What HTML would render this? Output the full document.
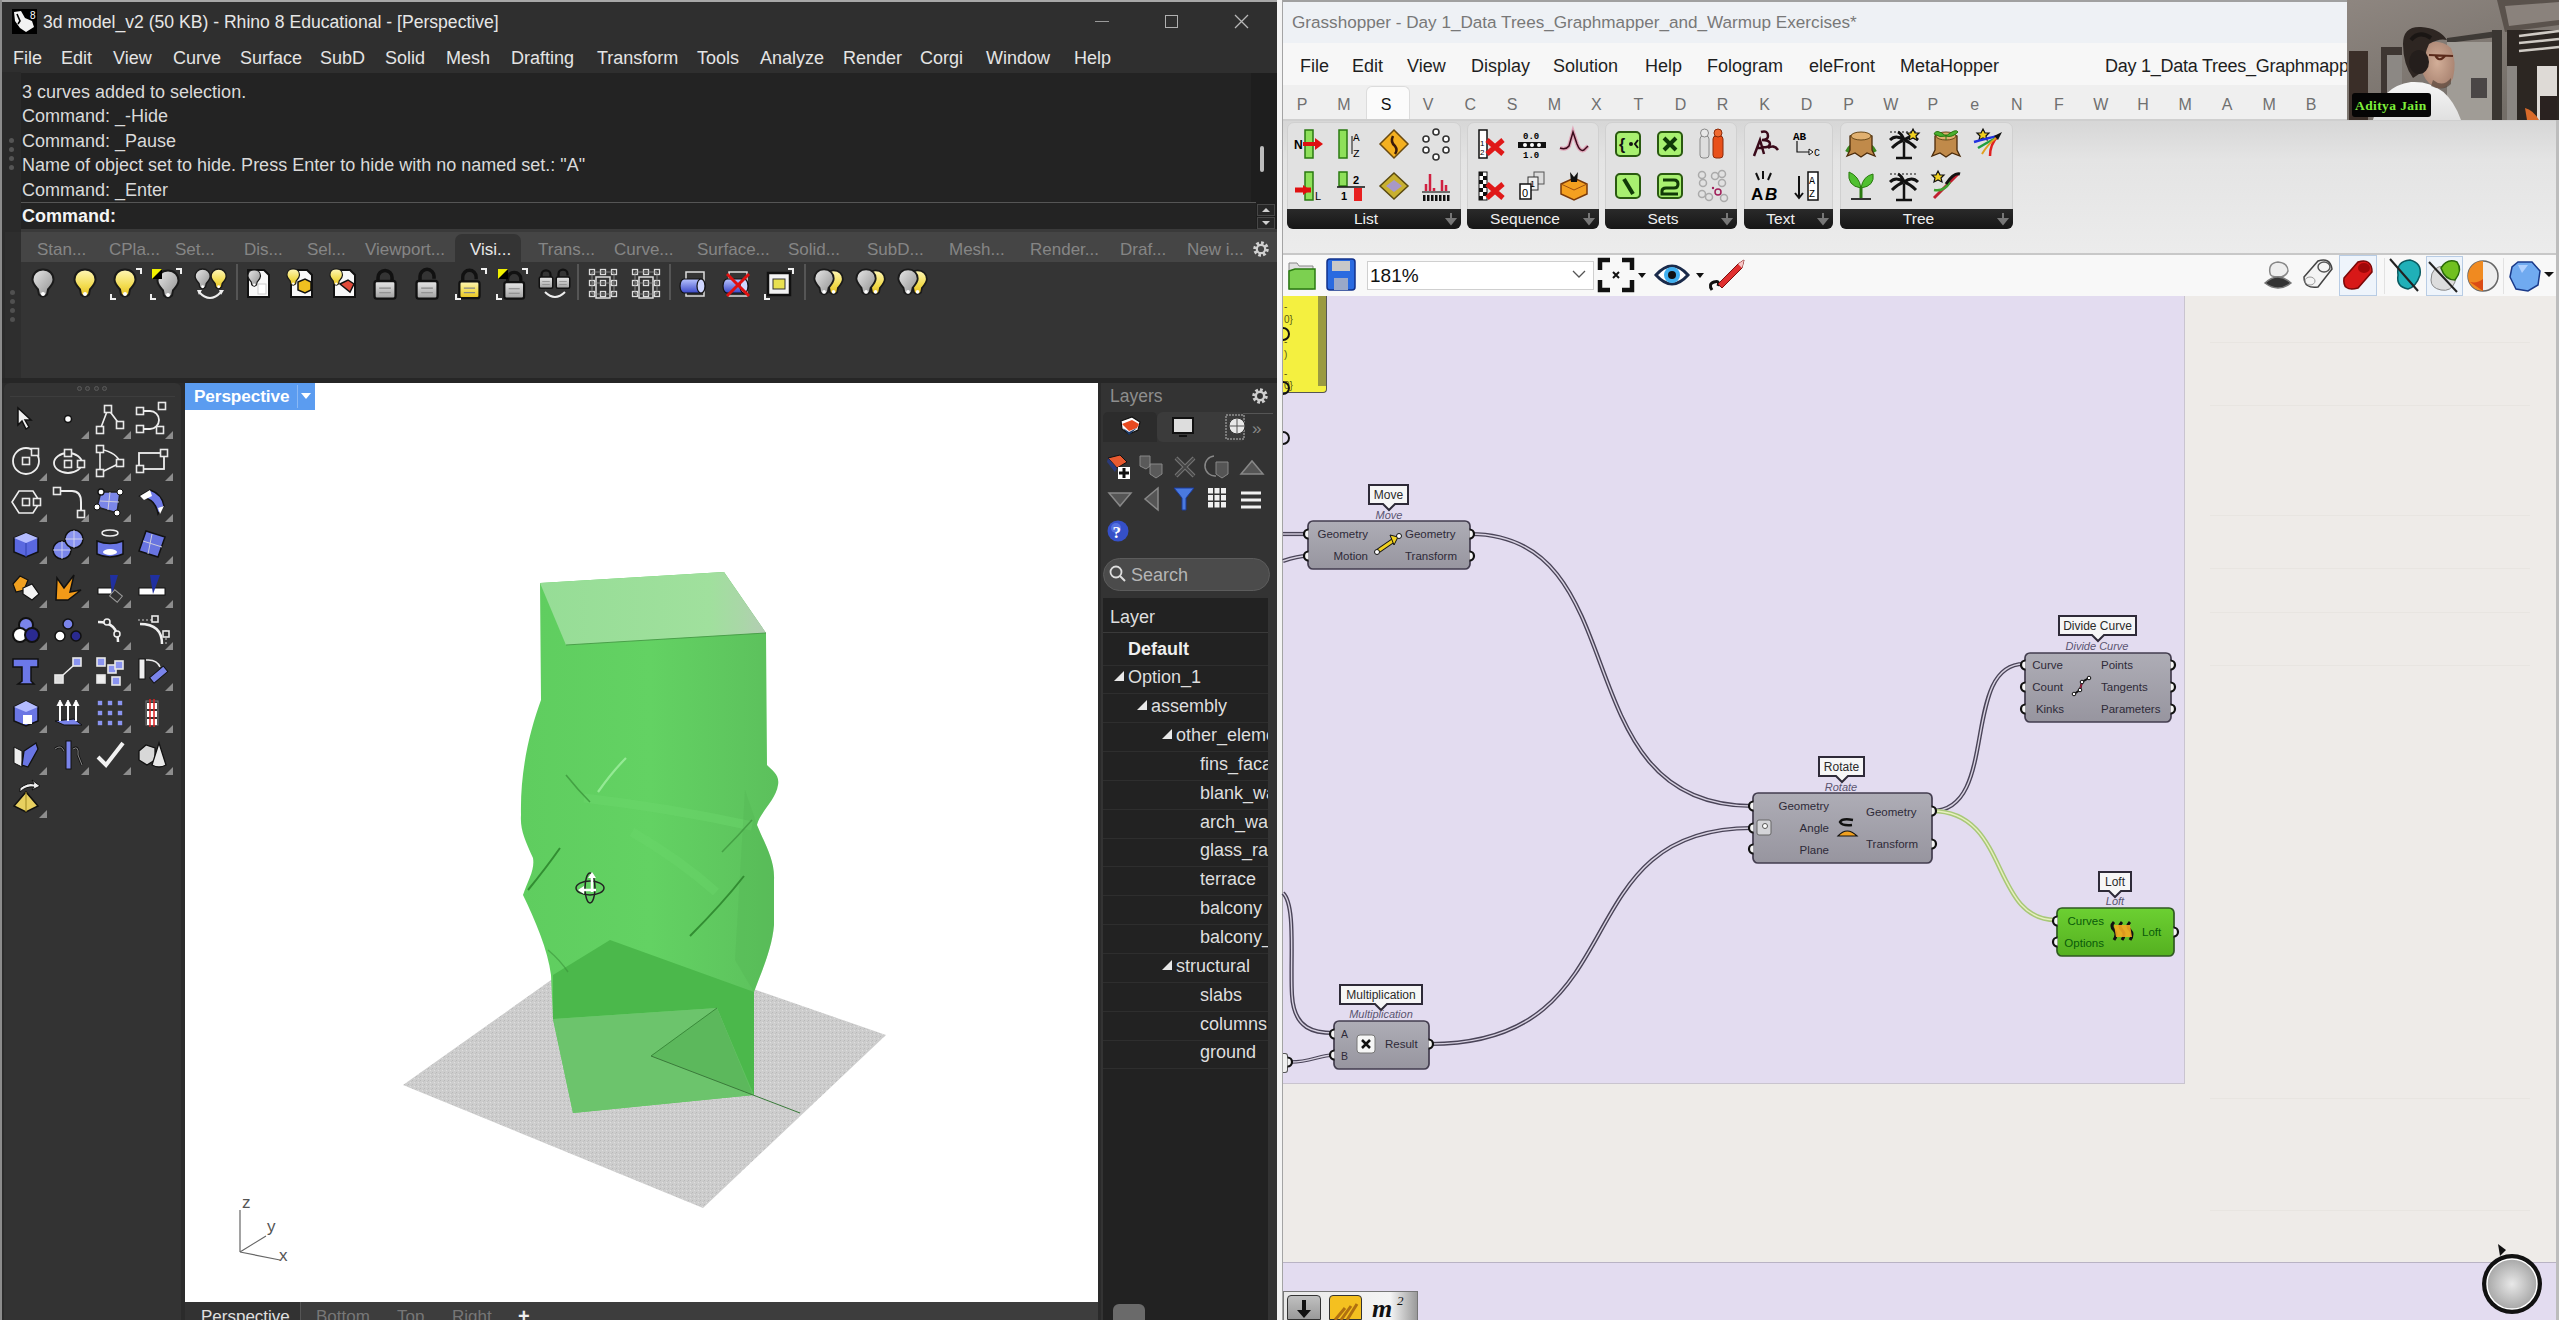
<!DOCTYPE html>
<html><head><meta charset="utf-8">
<style>
*{margin:0;padding:0;box-sizing:border-box}
html,body{width:2559px;height:1320px;overflow:hidden;background:#303030;font-family:"Liberation Sans",sans-serif;position:relative}
.a{position:absolute}
.t{position:absolute;white-space:nowrap;line-height:1}
svg{position:absolute;overflow:visible}
.mi{color:#e4e4e4;font-size:18px;top:48px}
.cl{color:#dadada;font-size:18px;left:22px}
.tb{color:#858585;font-size:17px;top:241px}
.ly{color:#dedede;font-size:18px}
.gm{color:#1e1e1e;font-size:18px;top:56px}
.gt{color:#6c6c6c;font-size:18px;top:95px}
.pl{color:#f2f2f2;font-size:15px;top:211px}
.nl{font-size:11.5px;color:#2e2a38}

</style></head><body>
<div class="a" style="left:0px;top:0px;width:1279px;height:2px;background:#a8a8a8;"></div>
<div class="a" style="left:0px;top:0px;width:2px;height:1320px;background:#8c8c8c;"></div>
<div class="a" style="left:2px;top:2px;width:1275px;height:71px;background:#2f2f2f;"></div>
<svg style="left:12px;top:9px;" width="25" height="25" viewBox="0 0 25 25"><rect x="0" y="0" width="25" height="25" fill="#000"/><path d="M2 3 L9 2 L13 9 L20 12 L22 18 L14 23 L8 19 L3 12 Z" fill="#f2f2f2"/><path d="M5 5 L8 12 L6 15" stroke="#000" stroke-width="1.6" fill="none"/><text x="18" y="10" font-size="10" fill="#fff" font-family="Liberation Sans">8</text></svg>
<div class="t " style="left:43px;top:14px;font-size:17.6px;color:#e6e6e6">3d model_v2 (50 KB) - Rhino 8 Educational - [Perspective]</div>
<div class="a" style="left:1095px;top:21px;width:14px;height:1px;background:#9a9a9a;"></div>
<div class="a" style="left:1165px;top:15px;width:13px;height:13px;background:transparent;border:1px solid #b0b0b0"></div>
<svg style="left:1234px;top:14px;" width="15" height="15" viewBox="0 0 15 15"><path d="M1 1 L14 14 M14 1 L1 14" stroke="#b8b8b8" stroke-width="1.3"/></svg>
<div class="t mi" style="left:13px;top:49px;">File</div>
<div class="t mi" style="left:61px;top:49px;">Edit</div>
<div class="t mi" style="left:113px;top:49px;">View</div>
<div class="t mi" style="left:173px;top:49px;">Curve</div>
<div class="t mi" style="left:240px;top:49px;">Surface</div>
<div class="t mi" style="left:320px;top:49px;">SubD</div>
<div class="t mi" style="left:385px;top:49px;">Solid</div>
<div class="t mi" style="left:446px;top:49px;">Mesh</div>
<div class="t mi" style="left:511px;top:49px;">Drafting</div>
<div class="t mi" style="left:597px;top:49px;">Transform</div>
<div class="t mi" style="left:697px;top:49px;">Tools</div>
<div class="t mi" style="left:760px;top:49px;">Analyze</div>
<div class="t mi" style="left:843px;top:49px;">Render</div>
<div class="t mi" style="left:920px;top:49px;">Corgi</div>
<div class="t mi" style="left:986px;top:49px;">Window</div>
<div class="t mi" style="left:1074px;top:49px;">Help</div>
<div class="a" style="left:2px;top:73px;width:1275px;height:305px;background:#2c2c2c;"></div>
<div class="a" style="left:2px;top:72px;width:19px;height:306px;background:#2a2a2a;"></div>
<div class="a" style="left:9px;top:138px;width:5px;height:5px;background:#555;border-radius:50%"></div>
<div class="a" style="left:9px;top:147px;width:5px;height:5px;background:#555;border-radius:50%"></div>
<div class="a" style="left:9px;top:156px;width:5px;height:5px;background:#555;border-radius:50%"></div>
<div class="a" style="left:9px;top:165px;width:5px;height:5px;background:#555;border-radius:50%"></div>
<div class="a" style="left:21px;top:73px;width:1230px;height:129px;background:#232323;"></div>
<div class="a" style="left:1251px;top:73px;width:26px;height:156px;background:#1e1e1e;"></div>
<div class="a" style="left:1260px;top:146px;width:4px;height:26px;background:#bdbdbd;border-radius:2px"></div>
<div class="a" style="left:21px;top:202px;width:1235px;height:1px;background:#555;"></div>
<div class="a" style="left:21px;top:203px;width:1235px;height:26px;background:#232323;"></div>
<div class="a" style="left:1257px;top:204px;width:18px;height:12px;background:#262626;border:1px solid #474747"></div>
<div class="a" style="left:1257px;top:217px;width:18px;height:12px;background:#262626;border:1px solid #474747"></div>
<svg style="left:1259px;top:206px;" width="14" height="22" viewBox="0 0 14 22"><path d="M3 6 L7 2 L11 6 Z M3 15 L7 19 L11 15 Z" fill="#cfcfcf"/></svg>
<div class="t cl" style="left:22px;top:83px;">3 curves added to selection.</div>
<div class="t cl" style="left:22px;top:107px;">Command: _-Hide</div>
<div class="t cl" style="left:22px;top:132px;">Command: _Pause</div>
<div class="t cl" style="left:22px;top:156px;">Name of object set to hide. Press Enter to hide with no named set.: &quot;A&quot;</div>
<div class="t cl" style="left:22px;top:181px;">Command: _Enter</div>
<div class="t cl" style="left:22px;top:207px;font-weight:bold;color:#f4f4f4">Command:</div>
<div class="a" style="left:21px;top:229px;width:1256px;height:3px;background:#3a3a3a;"></div>
<div class="a" style="left:21px;top:232px;width:1256px;height:30px;background:#454545;"></div>
<div class="a" style="left:21px;top:262px;width:1256px;height:116px;background:#343434;"></div>
<div class="a" style="left:5px;top:232px;width:16px;height:146px;background:#2e2e2e;"></div>
<div class="a" style="left:10px;top:290px;width:5px;height:5px;background:#505050;border-radius:50%"></div>
<div class="a" style="left:10px;top:299px;width:5px;height:5px;background:#505050;border-radius:50%"></div>
<div class="a" style="left:10px;top:308px;width:5px;height:5px;background:#505050;border-radius:50%"></div>
<div class="a" style="left:10px;top:317px;width:5px;height:5px;background:#505050;border-radius:50%"></div>
<div class="a" style="left:455px;top:234px;width:66px;height:28px;background:#343434;border-radius:7px 7px 0 0"></div>
<div class="t tb" style="left:37px;top:241px;">Stan...</div>
<div class="t tb" style="left:109px;top:241px;">CPla...</div>
<div class="t tb" style="left:175px;top:241px;">Set...</div>
<div class="t tb" style="left:244px;top:241px;">Dis...</div>
<div class="t tb" style="left:307px;top:241px;">Sel...</div>
<div class="t tb" style="left:365px;top:241px;">Viewport...</div>
<div class="t tb" style="left:470px;top:241px;color:#e8e8e8">Visi...</div>
<div class="t tb" style="left:538px;top:241px;">Trans...</div>
<div class="t tb" style="left:614px;top:241px;">Curve...</div>
<div class="t tb" style="left:697px;top:241px;">Surface...</div>
<div class="t tb" style="left:788px;top:241px;">Solid...</div>
<div class="t tb" style="left:867px;top:241px;">SubD...</div>
<div class="t tb" style="left:949px;top:241px;">Mesh...</div>
<div class="t tb" style="left:1030px;top:241px;">Render...</div>
<div class="t tb" style="left:1120px;top:241px;">Draf...</div>
<div class="t tb" style="left:1187px;top:241px;">New i...</div>
<svg style="left:1251px;top:239px;" width="20" height="20" viewBox="0 0 20 20"><circle cx="10" cy="10" r="6" fill="none" stroke="#d0d0d0" stroke-width="3.5" stroke-dasharray="2.6 2"/><circle cx="10" cy="10" r="4.2" fill="none" stroke="#d0d0d0" stroke-width="2.2"/></svg>
<div class="a" style="left:2px;top:378px;width:1275px;height:5px;background:#262626;"></div>
<svg width="0" height="0" style="position:absolute"><defs>
<linearGradient id="gb" x1="0" y1="0" x2="1" y2="1"><stop offset="0" stop-color="#e8e8e8"/><stop offset="1" stop-color="#8e8e8e"/></linearGradient>
<linearGradient id="yb" x1="0" y1="0" x2="0" y2="1"><stop offset="0" stop-color="#fff7b8"/><stop offset="0.6" stop-color="#f2dc50"/><stop offset="1" stop-color="#e8c020"/></linearGradient>
<linearGradient id="lk" x1="0" y1="0" x2="0" y2="1"><stop offset="0" stop-color="#e8e8e8"/><stop offset="1" stop-color="#a0a0a0"/></linearGradient>
<linearGradient id="bl" x1="0" y1="0" x2="0" y2="1"><stop offset="0" stop-color="#b8c4ff"/><stop offset="1" stop-color="#3a48c8"/></linearGradient>
<linearGradient id="ghp" x1="0" y1="0" x2="0" y2="1"><stop offset="0" stop-color="#e4e4e4"/><stop offset="1" stop-color="#d8d8d8"/></linearGradient>
<linearGradient id="node" x1="0" y1="0" x2="0" y2="1"><stop offset="0" stop-color="#aeadb6"/><stop offset="1" stop-color="#97959f"/></linearGradient>
<linearGradient id="nodeg" x1="0" y1="0" x2="0" y2="1"><stop offset="0" stop-color="#6cd032"/><stop offset="1" stop-color="#55b020"/></linearGradient>
</defs></svg>
<svg style="left:30px;top:268px;" width="26" height="32" viewBox="0 0 26 32"><g transform="translate(1,0) scale(1.0)"><path d="M12 1.5 C5.5 1.5 1.5 6 1.5 11.5 C1.5 15.5 4.5 18.5 7 21.5 L8 26.5 Q12 30.5 16 26.5 L17 21.5 C19.5 18.5 22.5 15.5 22.5 11.5 C22.5 6 18.5 1.5 12 1.5 Z" fill="url(#gb)" stroke="#1a1a1a" stroke-width="2"/><circle cx="12" cy="26" r="2" fill="#fff"/></g></svg>
<svg style="left:72px;top:268px;" width="26" height="32" viewBox="0 0 26 32"><g transform="translate(1,0) scale(1.0)"><path d="M12 1.5 C5.5 1.5 1.5 6 1.5 11.5 C1.5 15.5 4.5 18.5 7 21.5 L8 26.5 Q12 30.5 16 26.5 L17 21.5 C19.5 18.5 22.5 15.5 22.5 11.5 C22.5 6 18.5 1.5 12 1.5 Z" fill="url(#yb)" stroke="#1a1a1a" stroke-width="2"/><circle cx="12" cy="26" r="2" fill="#fff"/></g></svg>
<svg style="left:110px;top:268px;" width="32" height="32" viewBox="0 0 32 32"><g transform="translate(3,0) scale(1.0)"><path d="M12 1.5 C5.5 1.5 1.5 6 1.5 11.5 C1.5 15.5 4.5 18.5 7 21.5 L8 26.5 Q12 30.5 16 26.5 L17 21.5 C19.5 18.5 22.5 15.5 22.5 11.5 C22.5 6 18.5 1.5 12 1.5 Z" fill="url(#yb)" stroke="#1a1a1a" stroke-width="2"/><circle cx="12" cy="26" r="2" fill="#fff"/></g><path d="M26 1 L31 1 L31 6 M1 26 L1 31 L6 31" stroke="#f0f0f0" stroke-width="2" fill="none"/></svg>
<svg style="left:150px;top:268px;" width="32" height="32" viewBox="0 0 32 32"><g transform="translate(6,1) scale(1.0)"><path d="M12 1.5 C5.5 1.5 1.5 6 1.5 11.5 C1.5 15.5 4.5 18.5 7 21.5 L8 26.5 Q12 30.5 16 26.5 L17 21.5 C19.5 18.5 22.5 15.5 22.5 11.5 C22.5 6 18.5 1.5 12 1.5 Z" fill="url(#gb)" stroke="#1a1a1a" stroke-width="2"/><circle cx="12" cy="26" r="2" fill="#fff"/></g><rect x="2" y="1" width="10" height="10" fill="#000"/><path d="M2 1 L12 1 L2 11 Z" fill="#f0f000"/><path d="M26 1 L31 1 L31 6 M1 26 L1 31 L6 31" stroke="#f0f0f0" stroke-width="2" fill="none"/></svg>
<svg style="left:193px;top:268px;" width="36" height="34" viewBox="0 0 36 34"><g transform="translate(1,0) scale(0.72)"><path d="M12 1.5 C5.5 1.5 1.5 6 1.5 11.5 C1.5 15.5 4.5 18.5 7 21.5 L8 26.5 Q12 30.5 16 26.5 L17 21.5 C19.5 18.5 22.5 15.5 22.5 11.5 C22.5 6 18.5 1.5 12 1.5 Z" fill="url(#gb)" stroke="#1a1a1a" stroke-width="2"/><circle cx="12" cy="26" r="2" fill="#fff"/></g><g transform="translate(17,0) scale(0.72)"><path d="M12 1.5 C5.5 1.5 1.5 6 1.5 11.5 C1.5 15.5 4.5 18.5 7 21.5 L8 26.5 Q12 30.5 16 26.5 L17 21.5 C19.5 18.5 22.5 15.5 22.5 11.5 C22.5 6 18.5 1.5 12 1.5 Z" fill="url(#yb)" stroke="#1a1a1a" stroke-width="2"/><circle cx="12" cy="26" r="2" fill="#fff"/></g><path d="M6 24 Q17 36 28 24" stroke="#eee" stroke-width="2" fill="none"/><path d="M4 22 L9 22 L6 27 Z M26 22 L31 22 L28 27Z" fill="#eee"/></svg>
<div class="a" style="left:236px;top:264px;width:2px;height:36px;background:#555;"></div>
<svg style="left:244px;top:268px;" width="30" height="32" viewBox="0 0 30 32"><g transform="translate(1,0)"><path d="M3 2 H19 L24 7 V29 H3 Z" fill="#f8f8f8" stroke="#111" stroke-width="2"/></g><g transform="translate(3,1) scale(0.6)"><path d="M12 1.5 C5.5 1.5 1.5 6 1.5 11.5 C1.5 15.5 4.5 18.5 7 21.5 L8 26.5 Q12 30.5 16 26.5 L17 21.5 C19.5 18.5 22.5 15.5 22.5 11.5 C22.5 6 18.5 1.5 12 1.5 Z" fill="url(#gb)" stroke="#1a1a1a" stroke-width="2"/><circle cx="12" cy="26" r="2" fill="#fff"/></g><rect x="14" y="16" width="8" height="10" fill="#fff" stroke="#ccc"/></svg>
<svg style="left:286px;top:268px;" width="30" height="32" viewBox="0 0 30 32"><g transform="translate(2,0)"><path d="M3 2 H19 L24 7 V29 H3 Z" fill="#f8f8f8" stroke="#111" stroke-width="2"/></g><g transform="translate(0,0) scale(0.6)"><path d="M12 1.5 C5.5 1.5 1.5 6 1.5 11.5 C1.5 15.5 4.5 18.5 7 21.5 L8 26.5 Q12 30.5 16 26.5 L17 21.5 C19.5 18.5 22.5 15.5 22.5 11.5 C22.5 6 18.5 1.5 12 1.5 Z" fill="url(#yb)" stroke="#1a1a1a" stroke-width="2"/><circle cx="12" cy="26" r="2" fill="#fff"/></g><path d="M12 14 L19 11 L25 14 L25 22 L19 25 L12 22 Z" fill="#f0c020" stroke="#111" stroke-width="1.5"/></svg>
<svg style="left:329px;top:268px;" width="30" height="32" viewBox="0 0 30 32"><g transform="translate(2,0)"><path d="M3 2 H19 L24 7 V29 H3 Z" fill="#f8f8f8" stroke="#111" stroke-width="2"/></g><g transform="translate(0,0) scale(0.6)"><path d="M12 1.5 C5.5 1.5 1.5 6 1.5 11.5 C1.5 15.5 4.5 18.5 7 21.5 L8 26.5 Q12 30.5 16 26.5 L17 21.5 C19.5 18.5 22.5 15.5 22.5 11.5 C22.5 6 18.5 1.5 12 1.5 Z" fill="url(#yb)" stroke="#1a1a1a" stroke-width="2"/><circle cx="12" cy="26" r="2" fill="#fff"/></g><path d="M11 16 L19 12 L25 16 L21 24 Z" fill="#e04a3a" stroke="#111" stroke-width="1.5"/></svg>
<svg style="left:371px;top:267px;" width="28" height="32" viewBox="0 0 28 32"><g transform="translate(0,0) scale(1.17)"><path d="M6 13 L6 9 A6 6 0 0 1 18 9 L18 13" stroke="#111" stroke-width="3" fill="none"/><rect x="3" y="12" width="18" height="15" rx="2" fill="url(#lk)" stroke="#111" stroke-width="2"/><path d="M7 18 H17 M7 22 H17" stroke="#888" stroke-width="1"/></g></svg>
<svg style="left:413px;top:267px;" width="28" height="32" viewBox="0 0 28 32"><g transform="translate(0,0) scale(1.17)"><path d="M6 13 L6 8 A6 6 0 0 1 18 8 L18 10" stroke="#111" stroke-width="3" fill="none"/><rect x="3" y="12" width="18" height="15" rx="2" fill="url(#lk)" stroke="#111" stroke-width="2"/><path d="M7 18 H17 M7 22 H17" stroke="#888" stroke-width="1"/></g></svg>
<svg style="left:455px;top:268px;" width="32" height="32" viewBox="0 0 32 32"><g transform="translate(1,0) scale(1.12)"><path d="M6 13 L6 8 A6 6 0 0 1 18 8 L18 10" stroke="#111" stroke-width="3" fill="none"/><rect x="3" y="12" width="18" height="15" rx="2" fill="url(#yb)" stroke="#111" stroke-width="2"/><path d="M7 18 H17 M7 22 H17" stroke="#888" stroke-width="1"/></g><path d="M26 1 L31 1 L31 6 M1 26 L1 31 L6 31" stroke="#f0f0f0" stroke-width="2" fill="none"/></svg>
<svg style="left:496px;top:268px;" width="32" height="32" viewBox="0 0 32 32"><g transform="translate(5,1) scale(1.1)"><path d="M6 13 L6 9 A6 6 0 0 1 18 9 L18 13" stroke="#111" stroke-width="3" fill="none"/><rect x="3" y="12" width="18" height="15" rx="2" fill="url(#lk)" stroke="#111" stroke-width="2"/><path d="M7 18 H17 M7 22 H17" stroke="#888" stroke-width="1"/></g><rect x="2" y="1" width="10" height="10" fill="#000"/><path d="M2 1 L12 1 L2 11 Z" fill="#f0f000"/><path d="M26 1 L31 1 L31 6 M1 26 L1 31 L6 31" stroke="#f0f0f0" stroke-width="2" fill="none"/></svg>
<svg style="left:537px;top:268px;" width="36" height="32" viewBox="0 0 36 32"><g transform="translate(0,0) scale(0.75)"><path d="M6 13 L6 9 A6 6 0 0 1 18 9 L18 13" stroke="#111" stroke-width="3" fill="none"/><rect x="3" y="12" width="18" height="15" rx="2" fill="url(#lk)" stroke="#111" stroke-width="2"/><path d="M7 18 H17 M7 22 H17" stroke="#888" stroke-width="1"/></g><g transform="translate(17,0) scale(0.75)"><path d="M6 13 L6 8 A6 6 0 0 1 18 8 L18 10" stroke="#111" stroke-width="3" fill="none"/><rect x="3" y="12" width="18" height="15" rx="2" fill="url(#lk)" stroke="#111" stroke-width="2"/><path d="M7 18 H17 M7 22 H17" stroke="#888" stroke-width="1"/></g><path d="M8 24 Q18 34 28 24" stroke="#eee" stroke-width="2" fill="none"/></svg>
<div class="a" style="left:577px;top:264px;width:2px;height:36px;background:#555;"></div>
<svg style="left:588px;top:268px;" width="30" height="32" viewBox="0 0 30 32"><rect x="8" y="9" width="14" height="21" fill="none" stroke="#ddd" stroke-width="1.5"/><rect x="1.5" y="1.5" width="5" height="5" fill="#333" stroke="#ddd" stroke-width="1.3"/><rect x="1.5" y="12.5" width="5" height="5" fill="#333" stroke="#ddd" stroke-width="1.3"/><rect x="1.5" y="23.5" width="5" height="5" fill="#333" stroke="#ddd" stroke-width="1.3"/><rect x="12.5" y="1.5" width="5" height="5" fill="#333" stroke="#ddd" stroke-width="1.3"/><rect x="12.5" y="12.5" width="5" height="5" fill="#333" stroke="#ddd" stroke-width="1.3"/><rect x="12.5" y="23.5" width="5" height="5" fill="#333" stroke="#ddd" stroke-width="1.3"/><rect x="23.5" y="1.5" width="5" height="5" fill="#333" stroke="#ddd" stroke-width="1.3"/><rect x="23.5" y="12.5" width="5" height="5" fill="#333" stroke="#ddd" stroke-width="1.3"/><rect x="23.5" y="23.5" width="5" height="5" fill="#333" stroke="#ddd" stroke-width="1.3"/><path d="M4 4 H26 M4 15 H26 M4 26 H26 M4 4 V26 M26 4 V26" stroke="#999" stroke-width="0.8" fill="none"/></svg>
<svg style="left:631px;top:268px;" width="30" height="32" viewBox="0 0 30 32"><rect x="8" y="9" width="14" height="21" fill="none" stroke="#ddd" stroke-width="1.5"/><rect x="1.5" y="1.5" width="5" height="5" fill="#333" stroke="#ddd" stroke-width="1.3"/><rect x="1.5" y="12.5" width="5" height="5" fill="#333" stroke="#ddd" stroke-width="1.3"/><rect x="1.5" y="23.5" width="5" height="5" fill="#333" stroke="#ddd" stroke-width="1.3"/><rect x="12.5" y="1.5" width="5" height="5" fill="#333" stroke="#ddd" stroke-width="1.3"/><rect x="12.5" y="12.5" width="5" height="5" fill="#333" stroke="#ddd" stroke-width="1.3"/><rect x="12.5" y="23.5" width="5" height="5" fill="#333" stroke="#ddd" stroke-width="1.3"/><rect x="23.5" y="1.5" width="5" height="5" fill="#333" stroke="#ddd" stroke-width="1.3"/><rect x="23.5" y="12.5" width="5" height="5" fill="#333" stroke="#ddd" stroke-width="1.3"/><rect x="23.5" y="23.5" width="5" height="5" fill="#333" stroke="#ddd" stroke-width="1.3"/><path d="M4 4 H26 M4 15 H26 M4 26 H26 M4 4 V26 M26 4 V26" stroke="#999" stroke-width="0.8" fill="none"/></svg>
<div class="a" style="left:669px;top:264px;width:2px;height:36px;background:#555;"></div>
<svg style="left:679px;top:268px;" width="30" height="32" viewBox="0 0 30 32"><rect x="7" y="4" width="18" height="24" fill="none" stroke="#ddd" stroke-width="1.5"/><path d="M5 11 H22 A4 7 0 0 1 22 25 H5 A4 7 0 0 1 5 11 Z" fill="url(#bl)" stroke="#111" stroke-width="1.2"/><ellipse cx="22" cy="18" rx="4" ry="7" fill="#cfd6ff" stroke="#111" stroke-width="1.2"/></svg>
<svg style="left:722px;top:268px;" width="30" height="32" viewBox="0 0 30 32"><rect x="7" y="4" width="18" height="24" fill="none" stroke="#ddd" stroke-width="1.5"/><path d="M5 11 H22 A4 7 0 0 1 22 25 H5 A4 7 0 0 1 5 11 Z" fill="url(#bl)" stroke="#111" stroke-width="1.2"/><ellipse cx="22" cy="18" rx="4" ry="7" fill="#cfd6ff" stroke="#111" stroke-width="1.2"/><path d="M5 6 L27 28 M27 6 L5 28" stroke="#e01010" stroke-width="3"/></svg>
<svg style="left:764px;top:268px;" width="30" height="32" viewBox="0 0 30 32"><rect x="4" y="5" width="22" height="22" fill="#f4f4f4" stroke="#111" stroke-width="2.5"/><rect x="9" y="11" width="12" height="10" fill="#e8e050" stroke="#333"/><path d="M24 1 L29 1 L29 6 M1 26 L1 31 L6 31" stroke="#f0f0f0" stroke-width="2" fill="none"/></svg>
<div class="a" style="left:804px;top:264px;width:2px;height:36px;background:#555;"></div>
<svg style="left:813px;top:268px;" width="32" height="32" viewBox="0 0 32 32"><g transform="translate(10,1) scale(0.88)"><path d="M12 1.5 C5.5 1.5 1.5 6 1.5 11.5 C1.5 15.5 4.5 18.5 7 21.5 L8 26.5 Q12 30.5 16 26.5 L17 21.5 C19.5 18.5 22.5 15.5 22.5 11.5 C22.5 6 18.5 1.5 12 1.5 Z" fill="url(#yb)" stroke="#1a1a1a" stroke-width="2"/><circle cx="12" cy="26" r="2" fill="#fff"/></g><g transform="translate(0,0) scale(0.92)"><path d="M12 1.5 C5.5 1.5 1.5 6 1.5 11.5 C1.5 15.5 4.5 18.5 7 21.5 L8 26.5 Q12 30.5 16 26.5 L17 21.5 C19.5 18.5 22.5 15.5 22.5 11.5 C22.5 6 18.5 1.5 12 1.5 Z" fill="url(#gb)" stroke="#1a1a1a" stroke-width="2"/><circle cx="12" cy="26" r="2" fill="#fff"/></g></svg>
<svg style="left:855px;top:268px;" width="32" height="32" viewBox="0 0 32 32"><g transform="translate(10,1) scale(0.88)"><path d="M12 1.5 C5.5 1.5 1.5 6 1.5 11.5 C1.5 15.5 4.5 18.5 7 21.5 L8 26.5 Q12 30.5 16 26.5 L17 21.5 C19.5 18.5 22.5 15.5 22.5 11.5 C22.5 6 18.5 1.5 12 1.5 Z" fill="url(#yb)" stroke="#1a1a1a" stroke-width="2"/><circle cx="12" cy="26" r="2" fill="#fff"/></g><g transform="translate(0,0) scale(0.92)"><path d="M12 1.5 C5.5 1.5 1.5 6 1.5 11.5 C1.5 15.5 4.5 18.5 7 21.5 L8 26.5 Q12 30.5 16 26.5 L17 21.5 C19.5 18.5 22.5 15.5 22.5 11.5 C22.5 6 18.5 1.5 12 1.5 Z" fill="url(#gb)" stroke="#1a1a1a" stroke-width="2"/><circle cx="12" cy="26" r="2" fill="#fff"/></g></svg>
<svg style="left:897px;top:268px;" width="32" height="32" viewBox="0 0 32 32"><g transform="translate(10,1) scale(0.88)"><path d="M12 1.5 C5.5 1.5 1.5 6 1.5 11.5 C1.5 15.5 4.5 18.5 7 21.5 L8 26.5 Q12 30.5 16 26.5 L17 21.5 C19.5 18.5 22.5 15.5 22.5 11.5 C22.5 6 18.5 1.5 12 1.5 Z" fill="url(#yb)" stroke="#1a1a1a" stroke-width="2"/><circle cx="12" cy="26" r="2" fill="#fff"/></g><g transform="translate(0,0) scale(0.92)"><path d="M12 1.5 C5.5 1.5 1.5 6 1.5 11.5 C1.5 15.5 4.5 18.5 7 21.5 L8 26.5 Q12 30.5 16 26.5 L17 21.5 C19.5 18.5 22.5 15.5 22.5 11.5 C22.5 6 18.5 1.5 12 1.5 Z" fill="url(#gb)" stroke="#1a1a1a" stroke-width="2"/><circle cx="12" cy="26" r="2" fill="#fff"/></g></svg>
<div class="a" style="left:2px;top:383px;width:183px;height:937px;background:#2b2b2b;"></div>
<div class="a" style="left:4px;top:383px;width:177px;height:937px;background:#333333;border-radius:6px 6px 0 0"></div>
<div class="a" style="left:77px;top:386px;width:5px;height:5px;background:#3a3a3a;border:1px solid #5a5a5a;border-radius:50%"></div>
<div class="a" style="left:85px;top:386px;width:5px;height:5px;background:#3a3a3a;border:1px solid #5a5a5a;border-radius:50%"></div>
<div class="a" style="left:94px;top:386px;width:5px;height:5px;background:#3a3a3a;border:1px solid #5a5a5a;border-radius:50%"></div>
<div class="a" style="left:102px;top:386px;width:5px;height:5px;background:#3a3a3a;border:1px solid #5a5a5a;border-radius:50%"></div>
<div class="a" style="left:10px;top:396px;width:165px;height:1px;background:#3d3d3d;"></div>
<svg style="left:0px;top:0px;" width="190" height="830" viewBox="0 0 190 830"><g transform="translate(26,419)"><path d="M-8 -11 L-8 6 L-4 2 L0 10 L3 8 L-1 1 L5 1 Z" fill="#f0f0f0" stroke="#111" stroke-width="1.5"/></g><g transform="translate(68,419)"><circle cx="0" cy="0" r="3.5" fill="#fff" stroke="#111" stroke-width="1.5"/></g><path d="M89 431 L89 439 L81 439 Z" fill="#8d8d8d"/><g transform="translate(110,419)"><path d="M-10 11 L-2 -10 L10 6" stroke="#eee" stroke-width="1.6" fill="none"/><rect x="-13.5" y="7.5" width="7" height="7" fill="#333" stroke="#e8e8e8" stroke-width="1.6"/><rect x="-5.5" y="-13.5" width="7" height="7" fill="#333" stroke="#e8e8e8" stroke-width="1.6"/><rect x="6.5" y="2.5" width="7" height="7" fill="#333" stroke="#e8e8e8" stroke-width="1.6"/></g><path d="M131 431 L131 439 L123 439 Z" fill="#8d8d8d"/><g transform="translate(152,419)"><path d="M-12 -8 H-2 A9 9 0 0 1 -2 10 H-12" stroke="#eee" stroke-width="1.8" fill="none"/><rect x="-15.5" y="-11.5" width="7" height="7" fill="#333" stroke="#e8e8e8" stroke-width="1.6"/><rect x="-15.5" y="6.5" width="7" height="7" fill="#333" stroke="#e8e8e8" stroke-width="1.6"/><rect x="6.5" y="-16.5" width="7" height="7" fill="#333" stroke="#e8e8e8" stroke-width="1.6"/><rect x="4.5" y="7.5" width="7" height="7" fill="#333" stroke="#e8e8e8" stroke-width="1.6"/></g><path d="M173 431 L173 439 L165 439 Z" fill="#8d8d8d"/><g transform="translate(26,461)"><circle cx="0" cy="0" r="13" stroke="#eee" stroke-width="1.8" fill="none"/><rect x="-3.5" y="-3.5" width="7" height="7" fill="#333" stroke="#e8e8e8" stroke-width="1.6"/><rect x="5.5" y="-12.5" width="7" height="7" fill="#333" stroke="#e8e8e8" stroke-width="1.6"/></g><path d="M47 473 L47 481 L39 481 Z" fill="#8d8d8d"/><g transform="translate(68,461)"><ellipse cx="0" cy="2" rx="14" ry="10" stroke="#eee" stroke-width="1.8" fill="none"/><rect x="-3.5" y="-11.5" width="7" height="7" fill="#333" stroke="#e8e8e8" stroke-width="1.6"/><rect x="-3.5" y="-0.5" width="7" height="7" fill="#333" stroke="#e8e8e8" stroke-width="1.6"/><rect x="9.5" y="-0.5" width="7" height="7" fill="#333" stroke="#e8e8e8" stroke-width="1.6"/></g><path d="M89 473 L89 481 L81 481 Z" fill="#8d8d8d"/><g transform="translate(110,461)"><path d="M-10 -12 Q8 -8 10 2 L-10 12 Z" stroke="#eee" stroke-width="1.6" fill="none"/><rect x="-13.5" y="-15.5" width="7" height="7" fill="#333" stroke="#e8e8e8" stroke-width="1.6"/><rect x="6.5" y="-1.5" width="7" height="7" fill="#333" stroke="#e8e8e8" stroke-width="1.6"/><rect x="-13.5" y="8.5" width="7" height="7" fill="#333" stroke="#e8e8e8" stroke-width="1.6"/></g><path d="M131 473 L131 481 L123 481 Z" fill="#8d8d8d"/><g transform="translate(152,461)"><rect x="-13" y="-8" width="25" height="16" stroke="#eee" stroke-width="1.8" fill="none"/><rect x="8.5" y="-11.5" width="7" height="7" fill="#333" stroke="#e8e8e8" stroke-width="1.6"/><rect x="-15.5" y="4.5" width="7" height="7" fill="#333" stroke="#e8e8e8" stroke-width="1.6"/></g><path d="M173 473 L173 481 L165 481 Z" fill="#8d8d8d"/><g transform="translate(26,502)"><path d="M-7 -11 H7 L14 0 L7 11 H-7 L-14 0 Z" stroke="#eee" stroke-width="1.6" fill="none"/><rect x="-3.5" y="-3.5" width="7" height="7" fill="#333" stroke="#e8e8e8" stroke-width="1.6"/><rect x="7.5" y="-3.5" width="7" height="7" fill="#333" stroke="#e8e8e8" stroke-width="1.6"/></g><path d="M47 514 L47 522 L39 522 Z" fill="#8d8d8d"/><g transform="translate(68,502)"><path d="M-11 -11 H4 Q13 -11 13 0 V12" stroke="#eee" stroke-width="2" fill="none"/><rect x="-14.5" y="-14.5" width="7" height="7" fill="#333" stroke="#e8e8e8" stroke-width="1.6"/><rect x="9.5" y="8.5" width="7" height="7" fill="#333" stroke="#e8e8e8" stroke-width="1.6"/></g><path d="M89 514 L89 522 L81 522 Z" fill="#8d8d8d"/><g transform="translate(110,502)"><path d="M-9 -10 L10 -10 L7 11 L-13 5 Z" fill="#7b86e8" stroke="#222" stroke-width="1.5"/><path d="M-10 -1 L9 0 M0 -10 L-2 8" stroke="#ccd" stroke-width="1"/><circle cx="-9" cy="-10" r="3" fill="#fff" stroke="#111" stroke-width="1.3"/><circle cx="10" cy="-10" r="3" fill="#fff" stroke="#111"/><circle cx="-13" cy="5" r="3" fill="#fff" stroke="#111"/><circle cx="7" cy="11" r="3" fill="#fff" stroke="#111"/></g><path d="M131 514 L131 522 L123 522 Z" fill="#8d8d8d"/><g transform="translate(152,502)"><path d="M-12 -6 L-2 -12 Q10 -8 12 4 L6 12 Q4 0 -4 -3 Z" fill="#6f7ae6" stroke="#111" stroke-width="1.5"/><path d="M-12 -6 L-2 -12 L0 -6 L-8 -2Z" fill="#fff"/><path d="M6 6 L12 4 L8 12 Z" fill="#fff"/></g><path d="M173 514 L173 522 L165 522 Z" fill="#8d8d8d"/><g transform="translate(26,544)"><path d="M-12 -6 L0 -11 L12 -6 L12 8 L0 13 L-12 8 Z" fill="#5a68e0" stroke="#111" stroke-width="1.5"/><path d="M-12 -6 L0 -1 L12 -6 L0 -11 Z" fill="#b4bcff"/><path d="M0 -1 V13" stroke="#3040b0"/></g><path d="M47 556 L47 564 L39 564 Z" fill="#8d8d8d"/><g transform="translate(68,544)"><circle cx="-6" cy="6" r="9" fill="#7a86ea" stroke="#111" stroke-width="1.5"/><circle cx="6" cy="-5" r="9" fill="#8a94f0" stroke="#111" stroke-width="1.5"/><path d="M-15 6 H3 M-6 -3 V15 M-3 -5 H15 M6 -14 V4" stroke="#dde" stroke-width="0.8"/></g><path d="M89 556 L89 564 L81 564 Z" fill="#8d8d8d"/><g transform="translate(110,544)"><ellipse cx="0" cy="-11" rx="8" ry="3" fill="none" stroke="#eee" stroke-width="1.5"/><path d="M-13 -3 Q0 2 13 -3 V10 Q0 16 -13 10 Z" fill="#6a76e4" stroke="#111" stroke-width="1.5"/><ellipse cx="0" cy="8" rx="7" ry="3" fill="#fff"/></g><path d="M131 556 L131 564 L123 564 Z" fill="#8d8d8d"/><g transform="translate(152,544)"><path d="M-6 -13 L13 -7 L6 13 L-13 7 Z" fill="#6874e0" stroke="#111" stroke-width="1.5"/><path d="M-9 -3 L10 3 M0 -10 L-4 10" stroke="#ccd" stroke-width="1"/></g><path d="M173 556 L173 564 L165 564 Z" fill="#8d8d8d"/><g transform="translate(26,588)"><path d="M-13 -4 L-6 -12 L2 -8 L-2 2 L-10 4 Z" fill="#f0a020" stroke="#111" stroke-width="1.2"/><path d="M-3 0 L6 -4 L13 6 L6 12 L-3 6 Z" fill="#f4f4f4" stroke="#111" stroke-width="1.2"/></g><path d="M47 600 L47 608 L39 608 Z" fill="#8d8d8d"/><g transform="translate(68,588)"><path d="M-12 12 L-11 -10 L-4 0 L6 -13 L2 4 L13 2 L0 12 Z" fill="#f29a18" stroke="#111" stroke-width="1.5"/></g><path d="M89 600 L89 608 L81 608 Z" fill="#8d8d8d"/><g transform="translate(110,588)"><rect x="-12" y="0" width="14" height="6" fill="#fff" stroke="#111"/><path d="M0 -13 L8 -13 L2 6 Z" fill="#2030a0"/><rect x="1" y="4" width="10" height="8" fill="none" stroke="#999" transform="rotate(40 6 8)"/></g><path d="M131 600 L131 608 L123 608 Z" fill="#8d8d8d"/><g transform="translate(152,588)"><rect x="-13" y="0" width="26" height="7" fill="#fff" stroke="#111"/><path d="M-2 -13 L8 -13 L1 6 Z" fill="#2030a0"/></g><path d="M173 600 L173 608 L165 608 Z" fill="#8d8d8d"/><g transform="translate(26,630)"><circle cx="0" cy="-5" r="7" fill="#7a84ea" stroke="#111" stroke-width="2"/><circle cx="-6" cy="5" r="7" fill="#fff" stroke="#111" stroke-width="2"/><circle cx="6" cy="5" r="7" fill="#2a2a90" stroke="#111" stroke-width="2"/></g><path d="M47 642 L47 650 L39 650 Z" fill="#8d8d8d"/><g transform="translate(68,630)"><circle cx="0" cy="-6" r="5" fill="#7a84ea" stroke="#111" stroke-width="1.5"/><circle cx="-8" cy="6" r="5" fill="#fff" stroke="#111" stroke-width="1.5"/><circle cx="8" cy="6" r="5" fill="#2a2a90" stroke="#111" stroke-width="1.5"/></g><path d="M89 642 L89 650 L81 650 Z" fill="#8d8d8d"/><g transform="translate(110,630)"><path d="M-12 -8 Q8 -8 8 12" stroke="#f0f0f0" stroke-width="2.5" fill="none"/><circle cx="-3" cy="-8" r="3" fill="#333" stroke="#eee" stroke-width="1.5"/><circle cx="7" cy="4" r="3" fill="#333" stroke="#eee" stroke-width="1.5"/></g><path d="M131 642 L131 650 L123 650 Z" fill="#8d8d8d"/><g transform="translate(152,630)"><path d="M-12 -6 Q10 -6 10 14" stroke="#f0f0f0" stroke-width="2.5" fill="none"/><path d="M-14 -10 H2 M14 0 V16" stroke="#ccc" stroke-dasharray="2 2"/><rect x="0.0" y="-14.0" width="6" height="6" fill="#333" stroke="#e8e8e8" stroke-width="1.6"/><rect x="11.0" y="1.0" width="6" height="6" fill="#333" stroke="#e8e8e8" stroke-width="1.6"/></g><path d="M173 642 L173 650 L165 650 Z" fill="#8d8d8d"/><g transform="translate(26,671)"><path d="M-13 -12 H12 V-4 H5 V10 L8 13 H-8 L-4 10 V-4 H-13 Z" fill="#6c78e8" stroke="#111" stroke-width="1.5"/></g><path d="M47 683 L47 691 L39 691 Z" fill="#8d8d8d"/><g transform="translate(68,671)"><rect x="-13.0" y="4.0" width="8" height="8" fill="#ddd" stroke="#e8e8e8" stroke-width="1.6"/><rect x="5.0" y="-13.0" width="8" height="8" fill="#8a94f0" stroke="#e8e8e8" stroke-width="1.6"/><path d="M-5 4 L5 -5" stroke="#eee" stroke-width="1.5"/></g><path d="M89 683 L89 691 L81 691 Z" fill="#8d8d8d"/><g transform="translate(110,671)"><rect x="-13.0" y="-13.0" width="8" height="8" fill="#8a94f0" stroke="#e8e8e8" stroke-width="1.6"/><rect x="-2.0" y="-6.0" width="8" height="8" fill="#8a94f0" stroke="#e8e8e8" stroke-width="1.6"/><rect x="5.0" y="-10.0" width="8" height="8" fill="#8a94f0" stroke="#e8e8e8" stroke-width="1.6"/><rect x="-13.0" y="4.0" width="8" height="8" fill="#eee" stroke="#e8e8e8" stroke-width="1.6"/><rect x="2.0" y="6.0" width="8" height="8" fill="#8a94f0" stroke="#e8e8e8" stroke-width="1.6"/></g><path d="M131 683 L131 691 L123 691 Z" fill="#8d8d8d"/><g transform="translate(152,671)"><rect x="-13" y="-12" width="6" height="20" fill="#eee" stroke="#111"/><rect x="-2" y="0" width="18" height="7" fill="#7a84ea" stroke="#111" transform="rotate(-40 7 4)"/><path d="M-6 -11 Q5 -12 8 -4" stroke="#eee" stroke-width="1.5" fill="none"/></g><path d="M173 683 L173 691 L165 691 Z" fill="#8d8d8d"/><g transform="translate(26,713)"><path d="M-12 -6 L0 -12 L12 -6 L12 8 L0 13 L-12 8 Z" fill="#6a76e4" stroke="#111" stroke-width="1.5"/><path d="M-12 -6 L0 -1 L12 -6 L0 -12Z" fill="#b4bcff"/><rect x="-3" y="2" width="9" height="9" fill="#fff"/></g><path d="M47 725 L47 733 L39 733 Z" fill="#8d8d8d"/><g transform="translate(68,713)"><path d="M-13 8 L-4 12 L14 12 L6 6 Z" fill="#7a84ea" stroke="#111"/><path d="M-8 8 V-10 M0 8 V-10 M8 8 V-10" stroke="#fff" stroke-width="2"/><path d="M-11 -7 L-8 -13 L-5 -7 M-3 -7 L0 -13 L3 -7 M5 -7 L8 -13 L11 -7" fill="#fff" stroke="#fff"/></g><path d="M89 725 L89 733 L81 733 Z" fill="#8d8d8d"/><g transform="translate(110,713)"><rect x="-13.0" y="-13.0" width="6" height="6" fill="#8a94f0" stroke="#333" stroke-width="1.6"/><rect x="-13.0" y="-3.0" width="6" height="6" fill="#8a94f0" stroke="#333" stroke-width="1.6"/><rect x="-13.0" y="7.0" width="6" height="6" fill="#8a94f0" stroke="#333" stroke-width="1.6"/><rect x="-3.0" y="-13.0" width="6" height="6" fill="#8a94f0" stroke="#333" stroke-width="1.6"/><rect x="-3.0" y="-3.0" width="6" height="6" fill="#8a94f0" stroke="#333" stroke-width="1.6"/><rect x="-3.0" y="7.0" width="6" height="6" fill="#8a94f0" stroke="#333" stroke-width="1.6"/><rect x="7.0" y="-13.0" width="6" height="6" fill="#8a94f0" stroke="#333" stroke-width="1.6"/><rect x="7.0" y="-3.0" width="6" height="6" fill="#8a94f0" stroke="#333" stroke-width="1.6"/><rect x="7.0" y="7.0" width="6" height="6" fill="#8a94f0" stroke="#333" stroke-width="1.6"/></g><path d="M131 725 L131 733 L123 733 Z" fill="#8d8d8d"/><g transform="translate(152,713)"><rect x="-6" y="-12" width="12" height="24" fill="none" stroke="#777"/><rect x="-5" y="-10" width="10" height="6" fill="#fff"/><rect x="-5" y="-2" width="10" height="6" fill="#fff"/><rect x="-5" y="6" width="10" height="6" fill="#fff"/><path d="M-2 -14 V14 M2 -14 V14" stroke="#e02020" stroke-width="1.5"/></g><path d="M173 725 L173 733 L165 733 Z" fill="#8d8d8d"/><g transform="translate(26,755)"><path d="M-12 -8 L-4 -4 L-4 12 L-12 8 Z" fill="#eee" stroke="#111"/><path d="M-2 -4 L10 -12 L12 -6 L2 12 L-4 10 Z" fill="#6a76e4" stroke="#111" stroke-width="1.3"/></g><path d="M47 767 L47 775 L39 775 Z" fill="#8d8d8d"/><g transform="translate(68,755)"><rect x="-2" y="-14" width="5" height="28" fill="#7a84ea" stroke="#111"/><path d="M-13 -6 Q-7 -11 -4 -4 M5 -6 Q11 -10 10 0 L14 10" stroke="#111" stroke-width="2.5" fill="none"/><path d="M-13 -6 Q-7 -11 -4 -4 M5 -6 Q11 -10 10 0 L14 10" stroke="#888" stroke-width="1" fill="none"/></g><path d="M89 767 L89 775 L81 775 Z" fill="#8d8d8d"/><g transform="translate(110,755)"><path d="M-12 2 L-4 10 L13 -12" stroke="#f2f2f2" stroke-width="4" fill="none"/></g><path d="M131 767 L131 775 L123 775 Z" fill="#8d8d8d"/><g transform="translate(152,755)"><path d="M-13 -4 L-6 -10 L3 -7 L3 5 L-5 10 L-13 5 Z" fill="#d8d8d8" stroke="#111" stroke-width="1.3"/><path d="M7 -12 L14 10 Q7 14 0 10 Z" fill="#e8e8e8" stroke="#111" stroke-width="1.3"/></g><path d="M173 767 L173 775 L165 775 Z" fill="#8d8d8d"/><g transform="translate(26,798)"><path d="M-12 8 L0 -6 L12 8 L0 14 Z" fill="#e8d060" stroke="#111" stroke-width="1.5"/><path d="M0 -6 L0 14" stroke="#a08820"/><path d="M-6 -10 Q2 -16 8 -14 L6 -18 L14 -12 L6 -8 L8 -11 Q0 -12 -6 -6 Z" fill="#eee" stroke="#111"/></g><path d="M47 810 L47 818 L39 818 Z" fill="#8d8d8d"/></svg>
<div class="a" style="left:185px;top:383px;width:913px;height:919px;background:#ffffff;"></div>
<div class="a" style="left:185px;top:1302px;width:913px;height:18px;background:#3d3d3d;"></div>
<div class="a" style="left:185px;top:1302px;width:115px;height:18px;background:#323232;"></div>
<div class="a" style="left:300px;top:1302px;width:1px;height:18px;background:#555;"></div>
<div class="t " style="left:201px;top:1308px;font-size:17px;color:#e0e0e0">Perspective</div>
<div class="t " style="left:316px;top:1308px;font-size:17px;color:#777">Bottom</div>
<div class="t " style="left:397px;top:1308px;font-size:17px;color:#777">Top</div>
<div class="t " style="left:452px;top:1308px;font-size:17px;color:#777">Right</div>
<div class="t " style="left:518px;top:1306px;font-size:20px;color:#eee;font-weight:bold">+</div>
<div class="a" style="left:185px;top:383px;width:130px;height:27px;background:#5b9cf0;"></div>
<div class="a" style="left:297px;top:385px;width:1px;height:23px;background:#8ab8f4;"></div>
<svg style="left:300px;top:392px;" width="12" height="8" viewBox="0 0 12 8"><path d="M1 1 L11 1 L6 7 Z" fill="#fff"/></svg>
<div class="t " style="left:194px;top:388px;font-size:17.2px;color:#fff;font-weight:bold;letter-spacing:-0.1px">Perspective</div>
<svg style="left:230px;top:1190px;" width="70" height="75" viewBox="0 0 70 75"><path d="M10 62 V20 M10 62 L36 46 M10 62 L50 70" stroke="#666" stroke-width="1.2" fill="none"/><text x="12" y="18" font-size="17" fill="#555" font-family="Liberation Sans">z</text><text x="37" y="42" font-size="17" fill="#555" font-family="Liberation Sans">y</text><text x="49" y="71" font-size="17" fill="#555" font-family="Liberation Sans">x</text></svg>
<svg style="left:0px;top:0px;" width="1098" height="1302" viewBox="0 0 1098 1302">
<defs>
<pattern id="noise" width="4" height="4" patternUnits="userSpaceOnUse"><rect width="4" height="4" fill="#cdcdcd"/><rect x="0" y="0" width="1" height="1" fill="#b8b8b8"/><rect x="2" y="2" width="1" height="1" fill="#dedede"/><rect x="3" y="1" width="1" height="1" fill="#c2c2c2"/></pattern>
<linearGradient id="topf" x1="0" y1="0" x2="1" y2="0"><stop offset="0" stop-color="#96dd96"/><stop offset="0.75" stop-color="#a0e09d"/><stop offset="0.9" stop-color="#aad6a8"/><stop offset="1" stop-color="#b4ccb4"/></linearGradient>
<linearGradient id="bodyf" x1="0" y1="0" x2="1" y2="0"><stop offset="0" stop-color="#5fcd5f"/><stop offset="0.5" stop-color="#63d263"/><stop offset="1" stop-color="#5cc05c"/></linearGradient>
</defs>
<path d="M403 1085 L609 939 L886 1035 L703 1208 Z" fill="url(#noise)"/>
<path d="M540 583 L724 572 L766 633 L767 765 C772 770 780 775 778 785 C776 800 760 812 757 825 C765 845 775 860 774 880 L774 925 C772 950 760 975 754 992 L754 1095 L573 1113 L553 1019 L551 975 C548 950 535 920 523 895 C528 880 535 870 533 858 C525 840 520 830 521 815 C520 770 530 730 541 700 Z" fill="url(#bodyf)"/>
<path d="M540 583 L724 572 L766 633 L566 645 Z" fill="url(#topf)"/>
<path d="M553 975 L610 940 L754 992 L754 1095 L717 1008 L553 1019 Z" fill="#4bb84b"/>
<path d="M553 1019 L717 1008 L753 1095 L573 1113 Z" fill="#6cc46c"/>
<path d="M651 1056 L717 1008 L753 1095 Z" fill="#5cb85c"/>
<path d="M651 1056 L753 1095 L800 1113" stroke="#3a7a3a" stroke-width="1" fill="none"/>
<path d="M717 1008 L651 1056" stroke="#3a8a3a" stroke-width="1"/>
<path d="M566 645 L766 633" stroke="#4aa04a" stroke-width="1"/>
<path d="M584 798 Q670 808 752 826" stroke="#6cd86c" stroke-width="9" fill="none" opacity="0.45"/>
<path d="M632 832 Q680 860 716 892" stroke="#6cd86c" stroke-width="9" fill="none" opacity="0.4"/>
<path d="M745 790 L757 825 C765 845 775 860 774 880 L774 925 C772 950 760 975 754 992 L735 960 Z" fill="#4fae4f" opacity="0.25"/>
<path d="M598 792 Q612 772 626 758" stroke="#9aec9a" stroke-width="2.2" fill="none" opacity="0.9"/>
<path d="M566 775 Q578 790 590 802" stroke="#3c963c" stroke-width="1.6" fill="none" opacity="0.8"/>
<path d="M560 848 Q546 868 528 890" stroke="#2a822a" stroke-width="2" fill="none" opacity="0.85"/>
<path d="M744 876 Q722 904 690 936" stroke="#2a822a" stroke-width="2" fill="none" opacity="0.85"/>
<path d="M752 820 Q738 836 722 852" stroke="#3a923a" stroke-width="1.6" fill="none" opacity="0.7"/>
<path d="M548 950 Q560 960 568 972" stroke="#3a923a" stroke-width="1.4" fill="none" opacity="0.6"/>
<g transform="translate(590,888)"><ellipse cx="0" cy="0" rx="14" ry="7" fill="none" stroke="#222" stroke-width="1.5"/><ellipse cx="0" cy="0" rx="5" ry="15" fill="none" stroke="#222" stroke-width="1.5"/><path d="M-10 2 L6 2 M2 -14 L2 4" stroke="#fff" stroke-width="2.5"/><path d="M-12 2 L-6 -2 L-6 6Z M2 -16 L-2 -10 L6 -10Z" fill="#fff"/></g>
</svg>
<div class="a" style="left:1098px;top:383px;width:179px;height:937px;background:#333333;"></div>
<div class="a" style="left:1098px;top:383px;width:3px;height:937px;background:#2a2a2a;"></div>
<div class="a" style="left:1268px;top:383px;width:9px;height:937px;background:#333333;"></div>
<div class="t " style="left:1110px;top:388px;font-size:17.5px;color:#8e8e8e">Layers</div>
<svg style="left:1250px;top:386px;" width="20" height="20" viewBox="0 0 20 20"><circle cx="10" cy="10" r="6" fill="none" stroke="#cfcfcf" stroke-width="3.5" stroke-dasharray="2.6 2"/><circle cx="10" cy="10" r="4.2" fill="none" stroke="#cfcfcf" stroke-width="2.5"/><circle cx="10" cy="10" r="1.8" fill="#333"/></svg>
<div class="a" style="left:1103px;top:412px;width:54px;height:30px;background:#2c2c2c;border-radius:5px 5px 0 0"></div>
<div class="a" style="left:1157px;top:412px;width:88px;height:30px;background:#3b3b3b;border-radius:6px"></div>
<div class="a" style="left:1243px;top:413px;width:30px;height:1px;background:#555;"></div>
<svg style="left:1118px;top:413px;" width="26" height="26" viewBox="0 0 26 26"><path d="M3 8 L14 4 L22 9 L20 17 L11 21 L4 16 Z" fill="#fff" stroke="#111" stroke-width="1.2"/><path d="M4 11 L14 7 L21 11 L19 15 L11 18 Z" fill="#e84a20"/><path d="M5 15 L11 19 L19 15 L11 22 Z" fill="#1a3a6a"/></svg>
<svg style="left:1171px;top:416px;" width="24" height="22" viewBox="0 0 24 22"><rect x="2" y="2" width="20" height="15" fill="#ddd" stroke="#111" stroke-width="2"/><path d="M8 20 H16" stroke="#111" stroke-width="2"/></svg>
<svg style="left:1225px;top:414px;" width="24" height="26" viewBox="0 0 24 26"><rect x="1" y="1" width="18" height="24" fill="none" stroke="#bbb" stroke-dasharray="2 1"/><circle cx="12" cy="12" r="8" fill="#e8e8e8" stroke="#333"/><path d="M4 12 H20 M12 4 V20" stroke="#555"/></svg>
<div class="t " style="left:1252px;top:420px;font-size:17px;color:#888">&#187;</div>
<svg style="left:1105px;top:452px;" width="30" height="30" viewBox="0 0 30 30"><path d="M3 6 L15 3 L22 10 L12 16 Z" fill="#e85a30" stroke="#111"/><path d="M3 6 L12 16 L10 20 L2 10Z" fill="#2a3a7a"/><rect x="13" y="15" width="12" height="12" fill="#fff"/><path d="M19 16 V26 M14 21 H24" stroke="#111" stroke-width="3"/></svg>
<svg style="left:1138px;top:452px;" width="28" height="30" viewBox="0 0 28 30"><path d="M2 4 L12 4 L12 14 L8 17 L2 14 Z M12 12 L24 12 L24 22 L18 26 L12 22Z" fill="#5a5a5a" stroke="#888"/></svg>
<svg style="left:1173px;top:455px;" width="24" height="24" viewBox="0 0 24 24"><path d="M3 3 L21 21 M21 3 L3 21" stroke="#777" stroke-width="4"/><path d="M3 3 L21 21 M21 3 L3 21" stroke="#444" stroke-width="2"/></svg>
<svg style="left:1204px;top:452px;" width="28" height="30" viewBox="0 0 28 30"><path d="M12 10 L24 10 L24 22 L18 26 L12 22 Z" fill="#555" stroke="#888"/><path d="M10 4 A10 10 0 1 0 12 24" stroke="#888" stroke-width="1.5" fill="none"/></svg>
<svg style="left:1239px;top:458px;" width="26" height="18" viewBox="0 0 26 18"><path d="M2 16 L13 3 L24 16 Z" fill="#555" stroke="#888" stroke-width="1.5"/></svg>
<svg style="left:1107px;top:491px;" width="26" height="18" viewBox="0 0 26 18"><path d="M2 2 L13 15 L24 2 Z" fill="#555" stroke="#888" stroke-width="1.5"/></svg>
<svg style="left:1143px;top:486px;" width="18" height="26" viewBox="0 0 18 26"><path d="M15 2 L2 13 L15 24 Z" fill="#555" stroke="#888" stroke-width="1.5"/></svg>
<svg style="left:1173px;top:486px;" width="22" height="26" viewBox="0 0 22 26"><path d="M1 2 H21 L13 12 V24 L9 24 V12 Z" fill="#4a7ae0" stroke="#1a3a9a"/></svg>
<svg style="left:1207px;top:487px;" width="20" height="22" viewBox="0 0 20 22"><rect x="1.0" y="1" width="5" height="5.5" fill="#f0f0f0"/><rect x="1.0" y="8" width="5" height="5.5" fill="#f0f0f0"/><rect x="1.0" y="15" width="5" height="5.5" fill="#f0f0f0"/><rect x="7.5" y="1" width="5" height="5.5" fill="#f0f0f0"/><rect x="7.5" y="8" width="5" height="5.5" fill="#f0f0f0"/><rect x="7.5" y="15" width="5" height="5.5" fill="#f0f0f0"/><rect x="14.0" y="1" width="5" height="5.5" fill="#f0f0f0"/><rect x="14.0" y="8" width="5" height="5.5" fill="#f0f0f0"/><rect x="14.0" y="15" width="5" height="5.5" fill="#f0f0f0"/></svg>
<svg style="left:1240px;top:490px;" width="22" height="20" viewBox="0 0 22 20"><path d="M1 3 H21 M1 10 H21 M1 17 H21" stroke="#f0f0f0" stroke-width="3"/></svg>
<svg style="left:1107px;top:520px;" width="22" height="22" viewBox="0 0 22 22"><circle cx="11" cy="11" r="10.5" fill="#3550c8"/><circle cx="9" cy="8" r="5" fill="#6a88f0" opacity="0.6"/><text x="5.5" y="17.5" font-size="17" font-weight="bold" fill="#fff" font-family="Liberation Serif">?</text></svg>
<div class="a" style="left:1103px;top:558px;width:167px;height:33px;background:#4b4b4b;border-radius:17px;border:1px solid #5c5c5c"></div>
<svg style="left:1109px;top:565px;" width="18" height="18" viewBox="0 0 18 18"><circle cx="7" cy="7" r="5.5" fill="none" stroke="#ddd" stroke-width="1.8"/><path d="M11 11 L16 16" stroke="#ddd" stroke-width="2"/></svg>
<div class="t " style="left:1131px;top:566px;font-size:18px;color:#b5b5b5">Search</div>
<div class="a" style="left:1103px;top:598px;width:165px;height:722px;background:#222222;"></div>
<div class="a" style="left:1103px;top:632px;width:165px;height:1px;background:#3a3a3a;"></div>
<div class="t ly" style="left:1110px;top:608px;">Layer</div>
<div class="a" style="left:1103px;top:598px;width:165px;height:722px;overflow:hidden">
<div class="t ly" style="left:25px;top:42px;font-weight:bold;color:#f0f0f0">Default</div>
<div class="a" style="left:0;top:67px;width:168px;height:1px;background:#2e2e2e"></div>
<div class="t ly" style="left:25px;top:70px;">Option_1</div>
<div class="a" style="left:0;top:95px;width:168px;height:1px;background:#2e2e2e"></div>
<svg style="left:10px;top:72px" width="12" height="12"><path d="M11 1 L11 11 L1 11 Z" fill="#e8e8e8"/></svg>
<div class="t ly" style="left:48px;top:99px;">assembly</div>
<div class="a" style="left:0;top:124px;width:168px;height:1px;background:#2e2e2e"></div>
<svg style="left:33px;top:101px" width="12" height="12"><path d="M11 1 L11 11 L1 11 Z" fill="#e8e8e8"/></svg>
<div class="t ly" style="left:73px;top:128px;">other_eleme</div>
<div class="a" style="left:0;top:153px;width:168px;height:1px;background:#2e2e2e"></div>
<svg style="left:58px;top:130px" width="12" height="12"><path d="M11 1 L11 11 L1 11 Z" fill="#e8e8e8"/></svg>
<div class="t ly" style="left:97px;top:157px;">fins_facac</div>
<div class="a" style="left:0;top:182px;width:168px;height:1px;background:#2e2e2e"></div>
<div class="t ly" style="left:97px;top:186px;">blank_wa</div>
<div class="a" style="left:0;top:211px;width:168px;height:1px;background:#2e2e2e"></div>
<div class="t ly" style="left:97px;top:215px;">arch_wall</div>
<div class="a" style="left:0;top:240px;width:168px;height:1px;background:#2e2e2e"></div>
<div class="t ly" style="left:97px;top:243px;">glass_rail</div>
<div class="a" style="left:0;top:268px;width:168px;height:1px;background:#2e2e2e"></div>
<div class="t ly" style="left:97px;top:272px;">terrace</div>
<div class="a" style="left:0;top:297px;width:168px;height:1px;background:#2e2e2e"></div>
<div class="t ly" style="left:97px;top:301px;">balcony</div>
<div class="a" style="left:0;top:326px;width:168px;height:1px;background:#2e2e2e"></div>
<div class="t ly" style="left:97px;top:330px;">balcony_</div>
<div class="a" style="left:0;top:355px;width:168px;height:1px;background:#2e2e2e"></div>
<div class="t ly" style="left:73px;top:359px;">structural</div>
<div class="a" style="left:0;top:384px;width:168px;height:1px;background:#2e2e2e"></div>
<svg style="left:58px;top:361px" width="12" height="12"><path d="M11 1 L11 11 L1 11 Z" fill="#e8e8e8"/></svg>
<div class="t ly" style="left:97px;top:388px;">slabs</div>
<div class="a" style="left:0;top:413px;width:168px;height:1px;background:#2e2e2e"></div>
<div class="t ly" style="left:97px;top:417px;">columns</div>
<div class="a" style="left:0;top:442px;width:168px;height:1px;background:#2e2e2e"></div>
<div class="t ly" style="left:97px;top:445px;">ground</div>
<div class="a" style="left:0;top:470px;width:168px;height:1px;background:#2e2e2e"></div>
</div>
<div class="a" style="left:1113px;top:1304px;width:32px;height:16px;background:#6a6a6a;border-radius:6px 6px 0 0"></div>
<div class="a" style="left:1277px;top:0px;width:5px;height:1320px;background:#f4f4f4;"></div>
<div class="a" style="left:1281.5px;top:0px;width:2px;height:1320px;background:#a4a4a4;"></div>
<div class="a" style="left:1283px;top:0px;width:1276px;height:2px;background:#a0a0a0;"></div>
<div class="a" style="left:1283px;top:2px;width:1276px;height:41px;background:#eef1f5;"></div>
<div class="t " style="left:1292px;top:14px;font-size:17.14px;color:#787878">Grasshopper - Day 1_Data Trees_Graphmapper_and_Warmup Exercises*</div>
<div class="a" style="left:1283px;top:43px;width:1276px;height:42px;background:#f7f7f7;"></div>
<div class="t gm" style="left:1300px;top:57px;">File</div>
<div class="t gm" style="left:1352px;top:57px;">Edit</div>
<div class="t gm" style="left:1407px;top:57px;">View</div>
<div class="t gm" style="left:1471px;top:57px;">Display</div>
<div class="t gm" style="left:1553px;top:57px;">Solution</div>
<div class="t gm" style="left:1645px;top:57px;">Help</div>
<div class="t gm" style="left:1707px;top:57px;">Fologram</div>
<div class="t gm" style="left:1809px;top:57px;">eleFront</div>
<div class="t gm" style="left:1900px;top:57px;">MetaHopper</div>
<div class="t gm" style="left:2105px;top:57px;letter-spacing:-0.25px">Day 1_Data Trees_Graphmapper</div>
<div class="a" style="left:1283px;top:85px;width:1276px;height:34px;background:#efefef;"></div>
<div class="a" style="left:1366px;top:86px;width:44px;height:33px;background:#fbfbfb;border-radius:6px 6px 0 0;border:1px solid #dcdcdc;border-bottom:none"></div>
<div class="t" style="left:1292.0px;top:97px;width:20px;text-align:center;font-size:16px;color:#707070">P</div>
<div class="t" style="left:1334.0px;top:97px;width:20px;text-align:center;font-size:16px;color:#707070">M</div>
<div class="t" style="left:1376.1px;top:97px;width:20px;text-align:center;font-size:16px;color:#111">S</div>
<div class="t" style="left:1418.2px;top:97px;width:20px;text-align:center;font-size:16px;color:#707070">V</div>
<div class="t" style="left:1460.2px;top:97px;width:20px;text-align:center;font-size:16px;color:#707070">C</div>
<div class="t" style="left:1502.2px;top:97px;width:20px;text-align:center;font-size:16px;color:#707070">S</div>
<div class="t" style="left:1544.3px;top:97px;width:20px;text-align:center;font-size:16px;color:#707070">M</div>
<div class="t" style="left:1586.3px;top:97px;width:20px;text-align:center;font-size:16px;color:#707070">X</div>
<div class="t" style="left:1628.4px;top:97px;width:20px;text-align:center;font-size:16px;color:#707070">T</div>
<div class="t" style="left:1670.5px;top:97px;width:20px;text-align:center;font-size:16px;color:#707070">D</div>
<div class="t" style="left:1712.5px;top:97px;width:20px;text-align:center;font-size:16px;color:#707070">R</div>
<div class="t" style="left:1754.5px;top:97px;width:20px;text-align:center;font-size:16px;color:#707070">K</div>
<div class="t" style="left:1796.6px;top:97px;width:20px;text-align:center;font-size:16px;color:#707070">D</div>
<div class="t" style="left:1838.7px;top:97px;width:20px;text-align:center;font-size:16px;color:#707070">P</div>
<div class="t" style="left:1880.7px;top:97px;width:20px;text-align:center;font-size:16px;color:#707070">W</div>
<div class="t" style="left:1922.8px;top:97px;width:20px;text-align:center;font-size:16px;color:#707070">P</div>
<div class="t" style="left:1964.8px;top:97px;width:20px;text-align:center;font-size:16px;color:#707070">e</div>
<div class="t" style="left:2006.8px;top:97px;width:20px;text-align:center;font-size:16px;color:#707070">N</div>
<div class="t" style="left:2048.9px;top:97px;width:20px;text-align:center;font-size:16px;color:#707070">F</div>
<div class="t" style="left:2090.9px;top:97px;width:20px;text-align:center;font-size:16px;color:#707070">W</div>
<div class="t" style="left:2133.0px;top:97px;width:20px;text-align:center;font-size:16px;color:#707070">H</div>
<div class="t" style="left:2175.1px;top:97px;width:20px;text-align:center;font-size:16px;color:#707070">M</div>
<div class="t" style="left:2217.1px;top:97px;width:20px;text-align:center;font-size:16px;color:#707070">A</div>
<div class="t" style="left:2259.2px;top:97px;width:20px;text-align:center;font-size:16px;color:#707070">M</div>
<div class="t" style="left:2301.2px;top:97px;width:20px;text-align:center;font-size:16px;color:#707070">B</div>
<div class="a" style="left:1283px;top:119px;width:1276px;height:137px;background:linear-gradient(#d6d6d6,#e4e4e4 30%,#ececec);"></div>
<div class="a" style="left:1283px;top:119px;width:1276px;height:2px;background:#cfcfcf;"></div>
<div class="a" style="left:1287px;top:122px;width:174px;height:107px;background:#e1e1e1;border-radius:7px 7px 6px 6px;border:1px solid #d0d0d0"></div>
<div class="a" style="left:1287px;top:209px;width:174px;height:20px;background:linear-gradient(#2a2a2a,#161616);border-radius:0 0 6px 6px"></div>
<div class="t" style="left:1287px;top:211px;width:158px;text-align:center;font-size:15.5px;color:#f0f0f0">List</div>
<svg style="left:1445px;top:212px;" width="12" height="14" viewBox="0 0 12 14"><path d="M6 1 V8 M2 7 L6 12 L10 7 Z" stroke="#777" fill="#777" stroke-width="2"/></svg>
<div class="a" style="left:1467px;top:122px;width:132px;height:107px;background:#e1e1e1;border-radius:7px 7px 6px 6px;border:1px solid #d0d0d0"></div>
<div class="a" style="left:1467px;top:209px;width:132px;height:20px;background:linear-gradient(#2a2a2a,#161616);border-radius:0 0 6px 6px"></div>
<div class="t" style="left:1467px;top:211px;width:116px;text-align:center;font-size:15.5px;color:#f0f0f0">Sequence</div>
<svg style="left:1583px;top:212px;" width="12" height="14" viewBox="0 0 12 14"><path d="M6 1 V8 M2 7 L6 12 L10 7 Z" stroke="#777" fill="#777" stroke-width="2"/></svg>
<div class="a" style="left:1605px;top:122px;width:132px;height:107px;background:#e1e1e1;border-radius:7px 7px 6px 6px;border:1px solid #d0d0d0"></div>
<div class="a" style="left:1605px;top:209px;width:132px;height:20px;background:linear-gradient(#2a2a2a,#161616);border-radius:0 0 6px 6px"></div>
<div class="t" style="left:1605px;top:211px;width:116px;text-align:center;font-size:15.5px;color:#f0f0f0">Sets</div>
<svg style="left:1721px;top:212px;" width="12" height="14" viewBox="0 0 12 14"><path d="M6 1 V8 M2 7 L6 12 L10 7 Z" stroke="#777" fill="#777" stroke-width="2"/></svg>
<div class="a" style="left:1744px;top:122px;width:89px;height:107px;background:#e1e1e1;border-radius:7px 7px 6px 6px;border:1px solid #d0d0d0"></div>
<div class="a" style="left:1744px;top:209px;width:89px;height:20px;background:linear-gradient(#2a2a2a,#161616);border-radius:0 0 6px 6px"></div>
<div class="t" style="left:1744px;top:211px;width:73px;text-align:center;font-size:15.5px;color:#f0f0f0">Text</div>
<svg style="left:1817px;top:212px;" width="12" height="14" viewBox="0 0 12 14"><path d="M6 1 V8 M2 7 L6 12 L10 7 Z" stroke="#777" fill="#777" stroke-width="2"/></svg>
<div class="a" style="left:1840px;top:122px;width:173px;height:107px;background:#e1e1e1;border-radius:7px 7px 6px 6px;border:1px solid #d0d0d0"></div>
<div class="a" style="left:1840px;top:209px;width:173px;height:20px;background:linear-gradient(#2a2a2a,#161616);border-radius:0 0 6px 6px"></div>
<div class="t" style="left:1840px;top:211px;width:157px;text-align:center;font-size:15.5px;color:#f0f0f0">Tree</div>
<svg style="left:1997px;top:212px;" width="12" height="14" viewBox="0 0 12 14"><path d="M6 1 V8 M2 7 L6 12 L10 7 Z" stroke="#777" fill="#777" stroke-width="2"/></svg>
<div class="a" style="left:1283px;top:253px;width:1274px;height:2px;background:#c8c8c8;"></div>
<div class="a" style="left:1283px;top:255px;width:1274px;height:41px;background:#f8f8f8;"></div>
<div class="a" style="left:2556px;top:86px;width:3px;height:1234px;background:#bdbdbd;"></div>
<div class="a" style="left:1367px;top:261px;width:227px;height:29px;background:#ffffff;border:1px solid #cfcfcf"></div>
<div class="t " style="left:1370px;top:266px;font-size:19px;color:#111">181%</div>
<svg style="left:1572px;top:269px;" width="14" height="10" viewBox="0 0 14 10"><path d="M1 2 L7 8 L13 2" stroke="#555" stroke-width="1.3" fill="none"/></svg>
<svg style="left:1293px;top:128px" width="32" height="32" viewBox="-16 -16 32 32"><rect x="-4" y="-14" width="8" height="28" fill="#8ee05a" stroke="#2a7a10" stroke-width="1.5"/><path d="M-6 0 H8" stroke="#e01010" stroke-width="4"/><path d="M6 -6 L14 0 L6 6Z" fill="#e01010"/><text x="-15" y="5" font-size="12" font-weight="bold" font-family="Liberation Sans">N</text></svg>
<svg style="left:1335px;top:128px" width="32" height="32" viewBox="-16 -16 32 32"><rect x="-12" y="-14" width="8" height="28" fill="#8ee05a" stroke="#2a7a10" stroke-width="1.5"/><text x="2" y="-3" font-size="11" font-family="Liberation Mono">A</text><text x="2" y="13" font-size="11" font-family="Liberation Mono">Z</text><path d="M1 -8 V10" stroke="#111"/></svg>
<svg style="left:1378px;top:128px" width="32" height="32" viewBox="-16 -16 32 32"><path d="M0 -14 L14 0 L0 14 L-14 0 Z" fill="#f4b020" stroke="#6a4a10" stroke-width="1.5"/><path d="M-1 -8 Q-4 -2 1 2 Q4 6 1 10" stroke="#3a1a0a" stroke-width="2.5" fill="none"/></svg>
<svg style="left:1420px;top:128px" width="32" height="32" viewBox="-16 -16 32 32"><circle cx="0" cy="-12" r="3" fill="#fff" stroke="#333" stroke-width="1.6"/><circle cx="-10" cy="-5" r="3" fill="#fff" stroke="#333" stroke-width="1.6"/><circle cx="10" cy="-5" r="3" fill="#fff" stroke="#333" stroke-width="1.6"/><circle cx="-10" cy="6" r="3" fill="#fff" stroke="#333" stroke-width="1.6"/><circle cx="10" cy="6" r="3" fill="#fff" stroke="#333" stroke-width="1.6"/><circle cx="0" cy="13" r="3" fill="#fff" stroke="#333" stroke-width="1.6"/></svg>
<svg style="left:1293px;top:170px" width="32" height="32" viewBox="-16 -16 32 32"><rect x="-4" y="-14" width="8" height="28" fill="#8ee05a" stroke="#2a7a10" stroke-width="1.5"/><path d="M-14 4 H2" stroke="#e01010" stroke-width="5"/><path d="M-6 -1 L1 4 L-6 9Z" fill="#e01010"/><text x="6" y="14" font-size="11" font-family="Liberation Sans">L</text></svg>
<svg style="left:1335px;top:170px" width="32" height="32" viewBox="-16 -16 32 32"><rect x="-12" y="-14" width="8" height="14" fill="#8ee05a" stroke="#2a7a10" stroke-width="1.5"/><path d="M-14 1 H14" stroke="#111" stroke-width="1.5"/><rect x="3" y="2" width="8" height="13" fill="#e82020"/><text x="-10" y="14" font-size="11" font-family="Liberation Sans" font-weight="bold">1</text><text x="2" y="-2" font-size="11" font-family="Liberation Sans" font-weight="bold">2</text></svg>
<svg style="left:1378px;top:170px" width="32" height="32" viewBox="-16 -16 32 32"><path d="M0 -13 L14 0 L0 13 L-14 0 Z" fill="#c8b030" stroke="#5a4a10" stroke-width="1.5"/><path d="M0 -6 L8 0 L0 6 L-8 0 Z" fill="#a898c8"/></svg>
<svg style="left:1420px;top:170px" width="32" height="32" viewBox="-16 -16 32 32"><path d="M-14 6 H14" stroke="#444" stroke-width="1.5"/><rect x="-13" y="9" width="2.5" height="6" fill="#111"/><rect x="-9" y="9" width="2.5" height="6" fill="#111"/><rect x="-5" y="9" width="2.5" height="6" fill="#111"/><rect x="-1" y="9" width="2.5" height="6" fill="#111"/><rect x="3" y="9" width="2.5" height="6" fill="#111"/><rect x="7" y="9" width="2.5" height="6" fill="#111"/><rect x="11" y="9" width="2.5" height="6" fill="#111"/><path d="M-10 5 V-2 M-6 5 V-12 M-2 5 V2 M6 5 V-6 M10 5 V-1" stroke="#d02040" stroke-width="2.5"/></svg>
<svg style="left:1475px;top:128px" width="32" height="32" viewBox="-16 -16 32 32"><rect x="-12" y="-14" width="8" height="28" fill="#fff" stroke="#111" stroke-width="1.5"/><text x="-11" y="2" font-size="8" font-family="Liberation Sans">1</text><text x="-11" y="11" font-size="8" font-family="Liberation Sans">2</text><path d="M-4 -4 L12 10 M12 -4 L-4 10" stroke="#e01818" stroke-width="5"/></svg>
<svg style="left:1516px;top:128px" width="32" height="32" viewBox="-16 -16 32 32"><text x="-9" y="-5" font-size="9" font-weight="bold" font-family="Liberation Mono">0.0</text><rect x="-14" y="-2" width="28" height="6" fill="#111"/><circle cx="-7" cy="1" r="2" fill="#fff"/><circle cx="0" cy="1" r="2" fill="#fff"/><circle cx="7" cy="1" r="2" fill="#fff"/><text x="-9" y="14" font-size="9" font-weight="bold" font-family="Liberation Mono">1.0</text></svg>
<svg style="left:1558px;top:128px" width="32" height="32" viewBox="-16 -16 32 32"><path d="M-14 4 Q-8 6 -5 2 L-1 -12 L3 0 Q6 8 10 6 L14 2" stroke="#e080a0" stroke-width="4" fill="none" opacity="0.6"/><path d="M-14 4 Q-8 6 -5 2 L-1 -12 L3 0 Q6 8 10 6 L14 2" stroke="#3a0a1a" stroke-width="1.5" fill="none"/></svg>
<svg style="left:1475px;top:170px" width="32" height="32" viewBox="-16 -16 32 32"><rect x="-12" y="-14" width="8" height="28" fill="#fff" stroke="#111"/><rect x="-12" y="-14" width="4" height="4" fill="#111"/><rect x="-8" y="-10" width="4" height="4" fill="#111"/><rect x="-12" y="-6" width="4" height="4" fill="#111"/><rect x="-8" y="-2" width="4" height="4" fill="#111"/><rect x="-12" y="2" width="4" height="4" fill="#111"/><rect x="-8" y="6" width="4" height="4" fill="#111"/><rect x="-12" y="10" width="4" height="4" fill="#111"/><path d="M-4 -2 L12 12 M12 -2 L-4 12" stroke="#e01818" stroke-width="5"/></svg>
<svg style="left:1516px;top:170px" width="32" height="32" viewBox="-16 -16 32 32"><rect x="2" y="-14" width="10" height="12" fill="#ddd" stroke="#555"/><rect x="-4" y="-9" width="10" height="13" fill="#eee" stroke="#333"/><rect x="-12" y="-2" width="11" height="15" fill="#fff" stroke="#111" stroke-width="1.5"/><text x="-10" y="11" font-size="11" font-family="Liberation Sans">0</text><text x="-2" y="1" font-size="9" font-family="Liberation Sans">1</text></svg>
<svg style="left:1558px;top:170px" width="32" height="32" viewBox="-16 -16 32 32"><path d="M-13 -2 L0 -8 L13 -2 L13 8 L0 14 L-13 8 Z" fill="#f4a020" stroke="#7a3a0a" stroke-width="1.5"/><path d="M-13 -2 L0 4 L13 -2" stroke="#a05010" fill="none"/><path d="M-4 -14 L-3 -4 L3 -4 L4 -14 L0 -9 Z" fill="#111"/></svg>
<svg style="left:1612px;top:128px" width="32" height="32" viewBox="-16 -16 32 32"><rect x="-12" y="-12" width="24" height="24" rx="4" fill="#a8f070" stroke="#2a5a10" stroke-width="2"/><text x="-9" y="6" font-size="16" font-weight="bold" fill="#111" font-family="Liberation Sans">{</text><circle cx="3" cy="0" r="2" fill="#111"/><path d="M10 -4 L7 0 L10 4" stroke="#111" stroke-width="2" fill="none"/></svg>
<svg style="left:1654px;top:128px" width="32" height="32" viewBox="-16 -16 32 32"><rect x="-12" y="-12" width="24" height="24" rx="4" fill="#a8f070" stroke="#2a5a10" stroke-width="2"/><path d="M-6 -6 L6 6 M6 -6 L-6 6" stroke="#113a08" stroke-width="4"/></svg>
<svg style="left:1696px;top:128px" width="32" height="32" viewBox="-16 -16 32 32"><rect x="-12" y="-8" width="9" height="22" rx="3" fill="#ddd" stroke="#888"/><circle cx="-7.5" cy="-11" r="4" fill="#e8e8e8" stroke="#888"/><rect x="1" y="-8" width="10" height="22" rx="3" fill="#e8501a" stroke="#8a2a0a"/><circle cx="6" cy="-11" r="4" fill="#f06a30" stroke="#8a2a0a"/></svg>
<svg style="left:1612px;top:170px" width="32" height="32" viewBox="-16 -16 32 32"><rect x="-12" y="-12" width="24" height="24" rx="4" fill="#a8f070" stroke="#2a5a10" stroke-width="2"/><path d="M-4 -7 L5 8" stroke="#113a08" stroke-width="4"/></svg>
<svg style="left:1654px;top:170px" width="32" height="32" viewBox="-16 -16 32 32"><rect x="-12" y="-12" width="24" height="24" rx="4" fill="#a8f070" stroke="#2a5a10" stroke-width="2"/><path d="M-7 -6 H4 Q8 -6 8 -2 Q8 2 4 2 H-4 Q-8 2 -8 5 V8 H8" stroke="#113a08" stroke-width="3" fill="none"/></svg>
<svg style="left:1696px;top:170px" width="32" height="32" viewBox="-16 -16 32 32"><circle cx="-10" cy="-11" r="3.5" fill="none" stroke="#aaa" stroke-width="1.5"/><circle cx="-9" cy="-3" r="3.5" fill="none" stroke="#aaa" stroke-width="1.5"/><circle cx="-10" cy="8" r="3.5" fill="none" stroke="#aaa" stroke-width="1.5"/><circle cx="-3" cy="11" r="3.5" fill="none" stroke="#aaa" stroke-width="1.5"/><circle cx="3" cy="-10" r="3.5" fill="none" stroke="#aaa" stroke-width="1.5"/><circle cx="10" cy="-12" r="3.5" fill="none" stroke="#aaa" stroke-width="1.5"/><circle cx="10" cy="-3" r="3.5" fill="none" stroke="#aaa" stroke-width="1.5"/><circle cx="12" cy="12" r="3.5" fill="none" stroke="#aaa" stroke-width="1.5"/><circle cx="6" cy="6" r="3" fill="none" stroke="#a0205a" stroke-width="1.5"/><circle cx="1" cy="2" r="1.2" fill="#a0205a"/></svg>
<svg style="left:1750px;top:128px" width="32" height="32" viewBox="-16 -16 32 32"><path d="M-12 12 L-6 -4 L-2 10 M-9 4 H-3 M-5 -12 Q2 -14 2 -8 Q2 -4 -4 -4 Q4 -4 4 0 Q3 4 -3 3 M2 4 Q8 0 12 6" stroke="#3a0a1a" stroke-width="2.5" fill="none"/></svg>
<svg style="left:1791px;top:128px" width="32" height="32" viewBox="-16 -16 32 32"><text x="-14" y="-4" font-size="11" font-weight="bold" font-family="Liberation Mono">AB</text><path d="M-10 -3 V8 H2" stroke="#111" stroke-width="1.2" fill="none"/><path d="M2 5 L6 8 L2 11 Z" fill="#fff" stroke="#111"/><text x="7" y="12" font-size="10" font-family="Liberation Mono">C</text></svg>
<svg style="left:1750px;top:170px" width="32" height="32" viewBox="-16 -16 32 32"><text x="-15" y="14" font-size="17" font-weight="bold" font-family="Liberation Sans">A</text><text x="-1" y="14" font-size="17" font-style="italic" font-weight="bold" font-family="Liberation Sans">B</text><path d="M-10 -13 L-7 -6 M-3 -15 L-3 -7 M5 -13 L2 -6" stroke="#111" stroke-width="2"/></svg>
<svg style="left:1791px;top:170px" width="32" height="32" viewBox="-16 -16 32 32"><path d="M-8 -10 V12 M-12 7 L-8 12 L-4 7" stroke="#111" stroke-width="2" fill="none"/><rect x="1" y="-14" width="10" height="28" fill="#fff" stroke="#111" stroke-width="1.5"/><text x="2" y="-2" font-size="10" font-family="Liberation Mono">A</text><text x="2" y="11" font-size="10" font-family="Liberation Mono">Z</text></svg>
<svg style="left:1845px;top:128px" width="32" height="32" viewBox="-16 -16 32 32"><path d="M-14 8 Q-10 0 -8 4 M14 8 Q10 0 8 4" stroke="#3a8a20" stroke-width="4" fill="none"/><path d="M-11 -8 Q0 -14 11 -8 V6 L14 12 L6 9 L0 13 L-6 9 L-14 12 L-11 6 Z" fill="#c08a4a" stroke="#4a2a0a" stroke-width="1.3"/><ellipse cx="0" cy="-8" rx="10" ry="4" fill="#e0b070" stroke="#6a4a1a"/></svg>
<svg style="left:1888px;top:128px" width="32" height="32" viewBox="-16 -16 32 32"><path d="M0 14 V-2 M-8 14 H8" stroke="#111" stroke-width="2.5"/><path d="M0 -4 Q-8 -10 -14 -4 M0 -4 Q-6 -2 -12 4 M0 -4 Q8 -10 14 -4 M0 -4 Q6 -2 12 4 M0 -4 Q-2 -10 -6 -12" stroke="#111" stroke-width="3" fill="none"/><path d="M-14 -12 H12" stroke="#111" stroke-dasharray="2 2"/><path d="M9 -15 L11 -11 L15 -11 L12 -8 L13 -4 L9 -6 L5 -4 L6 -8 L3 -11 L7 -11 Z" fill="#f0d020" stroke="#111" stroke-width="1.2"/></svg>
<svg style="left:1930px;top:128px" width="32" height="32" viewBox="-16 -16 32 32"><path d="M-11 -8 Q0 -14 11 -8 V6 L14 12 L6 9 L0 13 L-6 9 L-14 12 L-11 6 Z" fill="#c08a4a" stroke="#4a2a0a" stroke-width="1.3"/><ellipse cx="0" cy="-8" rx="10" ry="4" fill="#e0b070" stroke="#6a4a1a"/><path d="M0 -4 V-10 M0 -8 Q-10 -16 -12 -10 Q-6 -6 0 -8 M0 -8 Q10 -16 12 -12 Q6 -6 0 -8" fill="#4ab030" stroke="#2a7a10"/></svg>
<svg style="left:1972px;top:128px" width="32" height="32" viewBox="-16 -16 32 32"><path d="M-5 -15 L-3 -11 L1 -11 L-2 -8 L-1 -4 L-5 -6 L-9 -4 L-8 -8 L-11 -11 L-7 -11 Z" fill="#f0d020" stroke="#111" stroke-width="1.2"/><path d="M-14 -2 Q0 -6 10 -8" stroke="#2030e0" stroke-width="2.5" fill="none"/><path d="M-10 4 Q0 -2 8 -6" stroke="#20a040" stroke-width="2.5" fill="none"/><path d="M2 12 Q2 0 10 -8" stroke="#e02020" stroke-width="2.5" fill="none"/><path d="M6 -8 L14 -12 L10 -4 Z" fill="#111"/><path d="M-6 10 Q0 0 8 -6" stroke="#e0a020" stroke-width="2" fill="none"/></svg>
<svg style="left:1845px;top:170px" width="32" height="32" viewBox="-16 -16 32 32"><path d="M0 14 V0" stroke="#2a7a10" stroke-width="3"/><path d="M-10 13 H10" stroke="#333" stroke-width="2"/><path d="M0 2 Q-14 0 -12 -14 Q-2 -10 0 2 Z M0 2 Q14 0 12 -12 Q2 -10 0 2Z" fill="#50c030" stroke="#2a7a10"/></svg>
<svg style="left:1888px;top:170px" width="32" height="32" viewBox="-16 -16 32 32"><path d="M0 14 V-2 M-8 14 H8" stroke="#111" stroke-width="2.5"/><path d="M0 -4 Q-8 -10 -14 -4 M0 -4 Q-6 -2 -12 4 M0 -4 Q8 -10 14 -4 M0 -4 Q6 -2 12 4 M0 -4 Q-2 -10 -6 -12" stroke="#111" stroke-width="3" fill="none"/><path d="M-14 -12 H12" stroke="#111" stroke-dasharray="2 2"/></svg>
<svg style="left:1930px;top:170px" width="32" height="32" viewBox="-16 -16 32 32"><path d="M-8 -15 L-6 -11 L-2 -11 L-5 -8 L-4 -4 L-8 -6 L-12 -4 L-11 -8 L-14 -11 L-10 -11 Z" fill="#f0d020" stroke="#111" stroke-width="1.2"/><path d="M-12 12 Q0 0 12 -12" stroke="#c02030" stroke-width="3" fill="none"/><path d="M-12 4 Q-2 6 4 -4" stroke="#40a030" stroke-width="2.5" fill="none"/><path d="M0 -2 Q8 -14 14 -12" stroke="#111" stroke-width="3" fill="none"/></svg>
<svg style="left:1287px;top:259px;" width="30" height="32" viewBox="0 0 30 32"><path d="M2 4 H10 L12 7 H26 V30 H2 Z" fill="#e0e0e0" stroke="#888"/><path d="M2 12 L8 10 H28 V30 H2 Z" fill="#7cd050" stroke="#2a7a10" stroke-width="1.5"/></svg>
<svg style="left:1326px;top:258px;" width="30" height="34" viewBox="0 0 30 34"><rect x="1" y="1" width="28" height="31" rx="3" fill="#2a6ae0" stroke="#10308a" stroke-width="1.5"/><rect x="6" y="3" width="18" height="10" fill="#c8c8c8"/><rect x="8" y="20" width="14" height="12" fill="#9aa8c8"/></svg>
<svg style="left:1598px;top:258px;" width="36" height="34" viewBox="0 0 36 34"><path d="M2 12 V2 H12 M24 2 H34 V12 M34 22 V32 H24 M12 32 H2 V22" stroke="#111" stroke-width="4.5" fill="none"/><path d="M15 14 L21 20 M21 14 L15 20" stroke="#111" stroke-width="2"/></svg>
<svg style="left:1638px;top:273px;" width="8" height="6" viewBox="0 0 8 6"><path d="M0 0 H8 L4 5Z" fill="#111"/></svg>
<svg style="left:1654px;top:260px;" width="36" height="30" viewBox="0 0 36 30"><path d="M2 15 Q18 -3 34 15 Q18 33 2 15 Z" fill="#fff" stroke="#1a2a4a" stroke-width="3"/><circle cx="18" cy="15" r="8" fill="#40b0f0"/><circle cx="18" cy="15" r="4" fill="#111"/></svg>
<svg style="left:1696px;top:273px;" width="8" height="6" viewBox="0 0 8 6"><path d="M0 0 H8 L4 5Z" fill="#111"/></svg>
<svg style="left:1708px;top:256px;" width="40" height="38" viewBox="0 0 40 38"><path d="M4 34 Q0 28 6 26 Q12 24 10 30" stroke="#111" stroke-width="3" fill="none"/><path d="M10 28 L30 8 L36 4 L34 12 L14 32 Z" fill="#e03030" stroke="#7a1010"/><path d="M30 8 L36 4 L34 12Z" fill="#f8c8c8"/></svg>
<svg style="left:2262px;top:259px;" width="34" height="34" viewBox="0 0 34 34"><path d="M8 14 Q6 4 16 3 Q26 4 26 12 Q24 18 16 18 Q8 18 8 14Z" fill="#eee" stroke="#888" stroke-width="1.5"/><path d="M3 24 Q16 12 29 24 Q16 34 3 24Z" fill="#333" stroke="#777" stroke-width="1.5"/></svg>
<svg style="left:2300px;top:257px;" width="36" height="36" viewBox="0 0 36 36"><path d="M4 20 L18 4 Q30 0 32 12 L18 30 Q4 32 4 20 Z" fill="#f4f4f4" stroke="#444" stroke-width="1.5"/><ellipse cx="24" cy="10" rx="6" ry="5" fill="none" stroke="#555" stroke-width="1.5"/><ellipse cx="10" cy="24" rx="5" ry="4" fill="none" stroke="#999"/></svg>
<div class="a" style="left:2339px;top:255px;width:38px;height:41px;background:#eef4fb;border:1px solid #b8cce4"></div>
<svg style="left:2340px;top:258px;" width="36" height="36" viewBox="0 0 36 36"><path d="M4 20 L18 4 Q32 0 32 14 L18 30 Q2 34 4 20 Z" fill="#d81818" stroke="#7a0808" stroke-width="1.5"/><ellipse cx="24" cy="10" rx="6" ry="5" fill="#a00808"/></svg>
<div class="a" style="left:2384px;top:258px;width:1px;height:36px;background:#e2e2e2;"></div>
<svg style="left:2390px;top:257px;" width="36" height="36" viewBox="0 0 36 36"><path d="M8 18 Q6 4 20 3 Q32 6 30 18 Q26 30 18 32 Q6 30 8 18Z" fill="#20b0b8" stroke="#0a5a60" stroke-width="1.5"/><path d="M0 2 L28 34" stroke="#222" stroke-width="2"/></svg>
<div class="a" style="left:2426px;top:256px;width:37px;height:40px;background:#eef4fb;border:1px solid #b8cce4"></div>
<svg style="left:2427px;top:258px;" width="36" height="36" viewBox="0 0 36 36"><path d="M4 22 Q4 8 18 8 Q30 10 28 24 Q24 34 14 32 Q4 30 4 22 Z" fill="#ddd" stroke="#888"/><path d="M14 10 Q20 0 30 4 Q36 12 28 22 Q18 22 14 10Z" fill="#70c020" stroke="#2a6a0a" stroke-width="1.5"/><path d="M2 4 L30 34" stroke="#222" stroke-width="2"/></svg>
<svg style="left:2465px;top:258px;" width="36" height="36" viewBox="0 0 36 36"><circle cx="18" cy="18" r="15" fill="#eee" stroke="#666" stroke-width="1.5"/><path d="M18 3 A15 15 0 0 0 18 33 Z" fill="#f08a20"/><path d="M18 21 A15 15 0 0 1 5 24 L18 33Z" fill="#d03010" opacity="0.7"/></svg>
<div class="a" style="left:2503px;top:258px;width:1px;height:36px;background:#e2e2e2;"></div>
<svg style="left:2508px;top:259px;" width="34" height="34" viewBox="0 0 34 34"><path d="M10 3 L24 3 L32 12 L30 26 L20 32 L8 30 L2 18 L4 8 Z" fill="#70aaf0" stroke="#1a3a8a" stroke-width="1.5"/><path d="M10 6 L20 6 L14 14 Z" fill="#b0d0ff"/></svg>
<svg style="left:2544px;top:272px;" width="10" height="6" viewBox="0 0 10 6"><path d="M0 0 H10 L5 5Z" fill="#111"/></svg>
<div class="a" style="left:1283px;top:296px;width:1273px;height:1024px;background:#e3dcf0;"></div>
<div class="a" style="left:2184px;top:296px;width:372px;height:967px;background:#eeebe8;"></div>
<div class="a" style="left:1283px;top:1083px;width:1273px;height:180px;background:#eeebe8;"></div>
<div class="a" style="left:2184px;top:296px;width:1px;height:787px;background:#c9c4cf;"></div>
<div class="a" style="left:1283px;top:1083px;width:902px;height:1px;background:#c9c4cf;"></div>
<div class="a" style="left:1283px;top:1262px;width:1273px;height:1px;background:#b9b3c4;"></div>
<div class="a" style="left:2210px;top:342px;width:320px;height:1px;background:rgba(200,195,185,0.15);"></div>
<div class="a" style="left:2210px;top:405px;width:320px;height:1px;background:rgba(200,195,185,0.15);"></div>
<div class="a" style="left:2210px;top:515px;width:320px;height:1px;background:rgba(200,195,185,0.15);"></div>
<div class="a" style="left:2210px;top:568px;width:320px;height:1px;background:rgba(200,195,185,0.15);"></div>
<div class="a" style="left:2210px;top:612px;width:320px;height:1px;background:rgba(200,195,185,0.15);"></div>
<div class="a" style="left:2210px;top:665px;width:320px;height:1px;background:rgba(200,195,185,0.15);"></div>
<div class="a" style="left:2210px;top:1098px;width:320px;height:1px;background:rgba(200,195,185,0.15);"></div>
<div class="a" style="left:2210px;top:1210px;width:320px;height:1px;background:rgba(200,195,185,0.15);"></div>
<div class="a" style="left:1283px;top:296px;width:44px;height:97px;background:#f4f040;border-radius:0 0 4px 0;border-right:1px solid #555;border-bottom:1px solid #555"></div>
<div class="a" style="left:1318px;top:296px;width:8px;height:90px;background:#9a9a40;"></div>
<div class="t " style="left:1284px;top:302px;font-size:10px;color:#5a5a10">-</div>
<div class="t " style="left:1284px;top:315px;font-size:10px;color:#5a5a10">0}</div>
<div class="t " style="left:1284px;top:337px;font-size:10px;color:#5a5a10">-</div>
<div class="t " style="left:1284px;top:350px;font-size:10px;color:#5a5a10">)</div>
<div class="t " style="left:1284px;top:369px;font-size:10px;color:#5a5a10">-</div>
<div class="t " style="left:1284px;top:381px;font-size:10px;color:#5a5a10">0}</div>
<svg style="left:0px;top:0px;" width="2559" height="1320" viewBox="0 0 2559 1320"><path d="M1470 534 C1640 534 1560 806 1752 806" stroke="#4a4458" stroke-width="4.2" fill="none"/><path d="M1470 534 C1640 534 1560 806 1752 806" stroke="#d8d2e2" stroke-width="1.4" fill="none"/><path d="M1430 1044 C1640 1044 1560 828 1752 828" stroke="#4a4458" stroke-width="4.2" fill="none"/><path d="M1430 1044 C1640 1044 1560 828 1752 828" stroke="#d8d2e2" stroke-width="1.4" fill="none"/><path d="M1932 811 C2000 811 1960 664 2024 664" stroke="#4a4458" stroke-width="4.2" fill="none"/><path d="M1932 811 C2000 811 1960 664 2024 664" stroke="#d8d2e2" stroke-width="1.4" fill="none"/><path d="M1932 811 C2010 811 1990 920 2056 920" stroke="#a8c878" stroke-width="4.5" fill="none"/><path d="M1932 811 C2010 811 1990 920 2056 920" stroke="#e8f0c0" stroke-width="1.4" fill="none"/><path d="M1283 534 L1307 534" stroke="#4a4458" stroke-width="4.2" fill="none"/><path d="M1283 534 L1307 534" stroke="#d8d2e2" stroke-width="1.4" fill="none"/><path d="M1283 561 C1292 558 1298 556 1307 556" stroke="#4a4458" stroke-width="4.2" fill="none"/><path d="M1283 561 C1292 558 1298 556 1307 556" stroke="#d8d2e2" stroke-width="1.4" fill="none"/><path d="M1283 893 C1296 905 1290 960 1292 995 C1294 1030 1315 1033 1334 1033" stroke="#4a4458" stroke-width="4.2" fill="none"/><path d="M1283 893 C1296 905 1290 960 1292 995 C1294 1030 1315 1033 1334 1033" stroke="#d8d2e2" stroke-width="1.4" fill="none"/><path d="M1291 1062 C1310 1062 1320 1055 1334 1055" stroke="#4a4458" stroke-width="3.5" fill="none"/><path d="M1291 1062 C1310 1062 1320 1055 1334 1055" stroke="#d8d2e2" stroke-width="1.4" fill="none"/><path d="M1283 328 A5 5 0 0 1 1283 340 M1283 382 A5 5 0 0 1 1283 394 M1283 432 A5 5 0 0 1 1283 444" stroke="#111" stroke-width="2" fill="none"/></svg>
<div class="a" style="left:1283px;top:1053px;width:5px;height:20px;background:#f0f0f0;border:1px solid #555;border-left:none;border-radius:0 3px 3px 0"></div>
<svg style="left:0px;top:0px;" width="2559" height="1320" viewBox="0 0 2559 1320"><path d="M1369 485 H1408 V504 H1395 L1389 510 L1383 504 H1369 Z" fill="#f6f6f6" stroke="#2e2a38" stroke-width="2"/><text x="1388.5" y="499" font-size="12" text-anchor="middle" fill="#2a2a2a" font-family="Liberation Sans">Move</text><text x="1389" y="519" font-size="11" font-style="italic" text-anchor="middle" fill="#5a5470" font-family="Liberation Sans">Move</text><rect x="1308" y="521" width="162" height="48" rx="5" fill="url(#node)" stroke="#433d4f" stroke-width="1.7"/><path d="M1308.5 529.5 A4.5 4.5 0 0 0 1308.5 538.5" fill="#f4f4f4" stroke="#111" stroke-width="2.2"/><path d="M1308.5 551.5 A4.5 4.5 0 0 0 1308.5 560.5" fill="#f4f4f4" stroke="#111" stroke-width="2.2"/><path d="M1469.5 529.5 A4.5 4.5 0 0 1 1469.5 538.5" fill="#f4f4f4" stroke="#111" stroke-width="2.2"/><path d="M1469.5 551.5 A4.5 4.5 0 0 1 1469.5 560.5" fill="#f4f4f4" stroke="#111" stroke-width="2.2"/><text x="1368" y="538" font-size="11.5" text-anchor="end" fill="#2e2a38" font-family="Liberation Sans">Geometry</text><text x="1368" y="560" font-size="11.5" text-anchor="end" fill="#2e2a38" font-family="Liberation Sans">Motion</text><text x="1405" y="538" font-size="11.5" text-anchor="start" fill="#2e2a38" font-family="Liberation Sans">Geometry</text><text x="1405" y="560" font-size="11.5" text-anchor="start" fill="#2e2a38" font-family="Liberation Sans">Transform</text><path d="M1378 551 L1394 540" stroke="#111" stroke-width="5"/><path d="M1378 551 L1394 540" stroke="#f0d020" stroke-width="3"/><path d="M1390 535 L1398 537 L1394 545Z" fill="#f0d020" stroke="#111"/><circle cx="1377" cy="552" r="2.5" fill="#fff" stroke="#111"/><circle cx="1399" cy="536" r="2.5" fill="#fff" stroke="#111"/><path d="M1819 757 H1864 V776 H1848 L1842 782 L1836 776 H1819 Z" fill="#f6f6f6" stroke="#2e2a38" stroke-width="2"/><text x="1841.5" y="771" font-size="12" text-anchor="middle" fill="#2a2a2a" font-family="Liberation Sans">Rotate</text><text x="1841" y="791" font-size="11" font-style="italic" text-anchor="middle" fill="#5a5470" font-family="Liberation Sans">Rotate</text><rect x="1753" y="793" width="179" height="70" rx="5" fill="url(#node)" stroke="#433d4f" stroke-width="1.7"/><path d="M1753.5 801.5 A4.5 4.5 0 0 0 1753.5 810.5" fill="#f4f4f4" stroke="#111" stroke-width="2.2"/><path d="M1753.5 823.5 A4.5 4.5 0 0 0 1753.5 832.5" fill="#f4f4f4" stroke="#111" stroke-width="2.2"/><path d="M1753.5 844.5 A4.5 4.5 0 0 0 1753.5 853.5" fill="#f4f4f4" stroke="#111" stroke-width="2.2"/><path d="M1931.5 806.5 A4.5 4.5 0 0 1 1931.5 815.5" fill="#f4f4f4" stroke="#111" stroke-width="2.2"/><path d="M1931.5 839.5 A4.5 4.5 0 0 1 1931.5 848.5" fill="#f4f4f4" stroke="#111" stroke-width="2.2"/><text x="1829" y="810" font-size="11.5" text-anchor="end" fill="#2e2a38" font-family="Liberation Sans">Geometry</text><text x="1829" y="832" font-size="11.5" text-anchor="end" fill="#2e2a38" font-family="Liberation Sans">Angle</text><text x="1829" y="854" font-size="11.5" text-anchor="end" fill="#2e2a38" font-family="Liberation Sans">Plane</text><text x="1866" y="816" font-size="11.5" text-anchor="start" fill="#2e2a38" font-family="Liberation Sans">Geometry</text><text x="1866" y="848" font-size="11.5" text-anchor="start" fill="#2e2a38" font-family="Liberation Sans">Transform</text><rect x="1757" y="820" width="14" height="15" rx="2" fill="#d4d4d8" stroke="#666"/><circle cx="1765" cy="826" r="2.5" fill="#fff" stroke="#555"/><path d="M1853 820 Q1842 818 1840 822 Q1842 826 1852 825" stroke="#111" stroke-width="2.5" fill="none"/><path d="M1838 836 Q1847 826 1857 836 Z" fill="#f0a020" stroke="#111" stroke-width="1.2"/><path d="M2059 616 H2136 V635 H2104 L2098 641 L2092 635 H2059 Z" fill="#f6f6f6" stroke="#2e2a38" stroke-width="2"/><text x="2097.5" y="630" font-size="12" text-anchor="middle" fill="#2a2a2a" font-family="Liberation Sans">Divide Curve</text><text x="2097" y="650" font-size="11" font-style="italic" text-anchor="middle" fill="#5a5470" font-family="Liberation Sans">Divide Curve</text><rect x="2025" y="653" width="146" height="69" rx="5" fill="url(#node)" stroke="#433d4f" stroke-width="1.7"/><path d="M2025.5 660.5 A4.5 4.5 0 0 0 2025.5 669.5" fill="#f4f4f4" stroke="#111" stroke-width="2.2"/><path d="M2025.5 682.5 A4.5 4.5 0 0 0 2025.5 691.5" fill="#f4f4f4" stroke="#111" stroke-width="2.2"/><path d="M2025.5 704.5 A4.5 4.5 0 0 0 2025.5 713.5" fill="#f4f4f4" stroke="#111" stroke-width="2.2"/><path d="M2170.5 660.5 A4.5 4.5 0 0 1 2170.5 669.5" fill="#f4f4f4" stroke="#111" stroke-width="2.2"/><path d="M2170.5 682.5 A4.5 4.5 0 0 1 2170.5 691.5" fill="#f4f4f4" stroke="#111" stroke-width="2.2"/><path d="M2170.5 704.5 A4.5 4.5 0 0 1 2170.5 713.5" fill="#f4f4f4" stroke="#111" stroke-width="2.2"/><text x="2063" y="669" font-size="11.5" text-anchor="end" fill="#2e2a38" font-family="Liberation Sans">Curve</text><text x="2063" y="691" font-size="11.5" text-anchor="end" fill="#2e2a38" font-family="Liberation Sans">Count</text><text x="2064" y="713" font-size="11.5" text-anchor="end" fill="#2e2a38" font-family="Liberation Sans">Kinks</text><text x="2101" y="669" font-size="11.5" text-anchor="start" fill="#2e2a38" font-family="Liberation Sans">Points</text><text x="2101" y="691" font-size="11.5" text-anchor="start" fill="#2e2a38" font-family="Liberation Sans">Tangents</text><text x="2101" y="713" font-size="11.5" text-anchor="start" fill="#2e2a38" font-family="Liberation Sans">Parameters</text><path d="M2074 694 L2080 690 L2082 682 L2089 678" stroke="#111" stroke-width="2" fill="none"/><path d="M2080 690 L2082 682" stroke="#a02040" stroke-width="1.5"/><circle cx="2074" cy="694" r="1.8" fill="#fff" stroke="#111"/><circle cx="2080" cy="690" r="1.8" fill="#fff" stroke="#111"/><circle cx="2082" cy="682" r="1.8" fill="#fff" stroke="#111"/><circle cx="2089" cy="678" r="1.8" fill="#fff" stroke="#111"/><path d="M2099 872 H2131 V891 H2121 L2115 897 L2109 891 H2099 Z" fill="#f6f6f6" stroke="#2e2a38" stroke-width="2"/><text x="2115.0" y="886" font-size="12" text-anchor="middle" fill="#2a2a2a" font-family="Liberation Sans">Loft</text><text x="2115" y="905" font-size="11" font-style="italic" text-anchor="middle" fill="#5a5470" font-family="Liberation Sans">Loft</text><rect x="2057" y="908" width="117" height="48" rx="5" fill="url(#nodeg)" stroke="#2f5a20" stroke-width="1.7"/><path d="M2057.5 916.5 A4.5 4.5 0 0 0 2057.5 925.5" fill="#f4f4f4" stroke="#111" stroke-width="2.2"/><path d="M2057.5 937.5 A4.5 4.5 0 0 0 2057.5 946.5" fill="#f4f4f4" stroke="#111" stroke-width="2.2"/><path d="M2173.5 927.5 A4.5 4.5 0 0 1 2173.5 936.5" fill="#f4f4f4" stroke="#111" stroke-width="2.2"/><text x="2104" y="925" font-size="11.5" text-anchor="end" fill="#0a5a0a" font-family="Liberation Sans">Curves</text><text x="2104" y="947" font-size="11.5" text-anchor="end" fill="#0a5a0a" font-family="Liberation Sans">Options</text><text x="2142" y="936" font-size="11.5" text-anchor="start" fill="#0a5a0a" font-family="Liberation Sans">Loft</text><path d="M2114 922 Q2110 926 2114 930 Q2118 934 2114 940 M2122 922 Q2118 926 2122 930 Q2126 934 2122 940 M2130 922 Q2126 926 2130 930 Q2134 934 2130 940" stroke="#111" stroke-width="3" fill="none"/><path d="M2114 925 L2122 925 L2124 937 L2116 937 Z M2122 925 L2130 925 L2132 937 L2124 937 Z" fill="#f4a820" opacity="0.9"/><path d="M1340 985 H1422 V1004 H1387 L1381 1010 L1375 1004 H1340 Z" fill="#f6f6f6" stroke="#2e2a38" stroke-width="2"/><text x="1381.0" y="999" font-size="12" text-anchor="middle" fill="#2a2a2a" font-family="Liberation Sans">Multiplication</text><text x="1381" y="1018" font-size="11" font-style="italic" text-anchor="middle" fill="#5a5470" font-family="Liberation Sans">Multiplication</text><rect x="1334" y="1021" width="95" height="48" rx="5" fill="url(#node)" stroke="#433d4f" stroke-width="1.7"/><path d="M1334.5 1029.5 A4.5 4.5 0 0 0 1334.5 1038.5" fill="#f4f4f4" stroke="#111" stroke-width="2.2"/><path d="M1334.5 1050.5 A4.5 4.5 0 0 0 1334.5 1059.5" fill="#f4f4f4" stroke="#111" stroke-width="2.2"/><path d="M1428.5 1039.5 A4.5 4.5 0 0 1 1428.5 1048.5" fill="#f4f4f4" stroke="#111" stroke-width="2.2"/><text x="1341" y="1038" font-size="10.5" text-anchor="start" fill="#2e2a38" font-family="Liberation Sans">A</text><text x="1341" y="1060" font-size="10.5" text-anchor="start" fill="#2e2a38" font-family="Liberation Sans">B</text><text x="1385" y="1048" font-size="11.5" text-anchor="start" fill="#2e2a38" font-family="Liberation Sans">Result</text><rect x="1357" y="1035" width="18" height="18" rx="3" fill="#f6f6f6" stroke="#777"/><path d="M1362 1040 L1370 1048 M1370 1040 L1362 1048" stroke="#111" stroke-width="2.5"/><path d="M1287.5 1057.5 A4.5 4.5 0 0 1 1287.5 1066.5" fill="#f4f4f4" stroke="#111" stroke-width="2.2"/></svg>
<div class="a" style="left:1283px;top:1291px;width:135px;height:29px;background:linear-gradient(90deg,#e8e8e8,#f4f4f4 80%,#9a9a9a);border:1px solid #777;border-bottom:none"></div>
<div class="a" style="left:1287px;top:1295px;width:34px;height:25px;background:linear-gradient(#c0c0c0,#9a9a9a);border:1.5px solid #333;border-radius:4px 4px 0 0"></div>
<svg style="left:1296px;top:1300px;" width="16" height="20" viewBox="0 0 16 20"><path d="M6 0 H10 V10 H15 L8 18 L1 10 H6 Z" fill="#111"/></svg>
<div class="a" style="left:1329px;top:1295px;width:33px;height:25px;background:#f4c020;border:1.5px solid #333;border-radius:4px 4px 0 0"></div>
<svg style="left:1331px;top:1300px;" width="30" height="20" viewBox="0 0 30 20"><path d="M4 20 L14 8 M10 20 L20 6 M16 20 L26 4" stroke="#b07010" stroke-width="3"/></svg>
<div class="t " style="left:1372px;top:1296px;font-size:26px;font-style:italic;font-weight:bold;color:#111;font-family:'Liberation Serif'">m</div>
<div class="t " style="left:1397px;top:1294px;font-size:13px;font-style:italic;color:#111;font-family:'Liberation Serif'">2</div>
<svg style="left:2476px;top:1240px;" width="72" height="80" viewBox="0 0 72 80"><circle cx="36" cy="44" r="30" fill="#111"/><circle cx="36" cy="44" r="25" fill="url(#cmp)" stroke="#fff" stroke-width="1.5"/><path d="M22 4 L30 10 L24 16Z" fill="#111"/><defs><radialGradient id="cmp"><stop offset="0" stop-color="#e8e8e8"/><stop offset="1" stop-color="#a8a8a8"/></radialGradient></defs></svg>
<svg style="left:2347px;top:0px;" width="212" height="120" viewBox="0 0 212 120">
<defs>
<linearGradient id="wall" x1="0" y1="0" x2="0.6" y2="1"><stop offset="0" stop-color="#8e8680"/><stop offset="1" stop-color="#746e68"/></linearGradient>
<linearGradient id="shirt" x1="0" y1="0" x2="0" y2="1"><stop offset="0" stop-color="#f6f6f6"/><stop offset="1" stop-color="#e0e0e0"/></linearGradient>
<radialGradient id="skin" cx="0.45" cy="0.45" r="0.6"><stop offset="0" stop-color="#d2ae98"/><stop offset="1" stop-color="#a88270"/></radialGradient>
</defs>
<rect x="0" y="0" width="212" height="120" fill="url(#wall)"/>
<rect x="2" y="51" width="19" height="69" fill="#3a2e28"/>
<rect x="34" y="47" width="21" height="73" fill="#3e3632"/>
<rect x="40" y="55" width="15" height="65" fill="#8c8884"/>
<path d="M100 38 L150 31 L150 37 L100 43 Z" fill="#3e3a36"/>
<rect x="100" y="42" width="48" height="78" fill="#a09c96"/>
<rect x="124" y="78" width="16" height="20" fill="#4a4646"/>
<rect x="145" y="30" width="10" height="90" fill="#3a3632"/>
<path d="M150 0 L212 0 L212 25 L158 32 Z" fill="#5a524c"/>
<path d="M158 6 L212 2 L212 20 L162 26 Z" fill="#8a827c"/>
<rect x="160" y="30" width="52" height="90" fill="#2c2622"/>
<path d="M172 36 L212 31 M172 43 L212 39 M172 51 L212 47" stroke="#cfcac4" stroke-width="2.5"/>
<rect x="190" y="66" width="20" height="54" fill="#dedad6"/>
<rect x="160" y="66" width="10" height="54" fill="#8a8682"/>
<rect x="193" y="96" width="17" height="24" fill="#2a2220"/>
<path d="M178 108 Q186 110 192 120 L180 120 Z" fill="#d86a2a"/>
<path d="M26 120 Q34 86 64 82 Q100 80 114 120 Z" fill="url(#shirt)"/>
<path d="M80 44 Q92 38 104 48 Q110 62 106 78 Q100 90 90 88 Q80 84 76 74 Z" fill="url(#skin)"/>
<path d="M56 44 Q56 26 74 27 Q92 28 100 40 Q92 38 82 44 Q76 56 78 70 L66 78 Q56 64 56 44 Z" fill="#2e2622"/>
<ellipse cx="72" cy="62" rx="10" ry="12" fill="#241e1c"/>
<path d="M64 40 Q72 30 84 38" stroke="#1a1614" stroke-width="4" fill="none"/>
<path d="M82 55 L106 56 M88 55 Q92 63 98 56" stroke="#5a2a1a" stroke-width="2" fill="none"/>
<path d="M86 80 Q96 88 104 78 L104 84 Q96 92 84 86 Z" fill="#4a3a30" opacity="0.6"/>
<rect x="5" y="93" width="79" height="24" rx="3" fill="#050505"/>
<text x="8" y="110" font-size="13.5" font-weight="bold" fill="#7ef03a" font-family="Liberation Serif" letter-spacing="0.4">Aditya Jain</text>
</svg>
</body></html>
